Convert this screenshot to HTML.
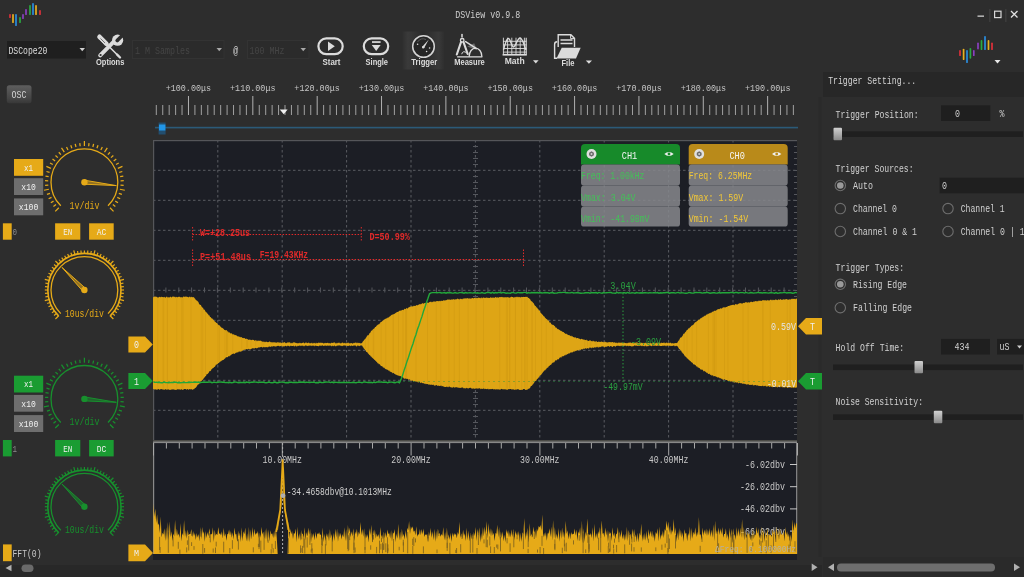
<!DOCTYPE html>
<html><head><meta charset="utf-8"><title>DSView</title>
<style>html,body{margin:0;padding:0;background:#2d2d2d;overflow:hidden;width:1024px;height:577px} svg{display:block;will-change:transform}</style>
</head><body><svg width="1024" height="577" viewBox="0 0 1024 577"><rect x="0" y="0" width="1024" height="577" fill="#2d2d2d"/>
<rect x="818.5" y="97" width="3" height="460" fill="#2a2a2a"/>
<rect x="9.15" y="14" width="1.7" height="4" rx="0.85" fill="#e0303a"/>
<rect x="12.15" y="14" width="1.7" height="9" rx="0.85" fill="#e8b020"/>
<rect x="15.15" y="14" width="1.7" height="12" rx="0.85" fill="#2a8ee0"/>
<rect x="19.15" y="17" width="1.7" height="6" rx="0.85" fill="#2aaa40"/>
<rect x="22.15" y="14" width="1.7" height="5" rx="0.85" fill="#8a40c0"/>
<rect x="25.15" y="9" width="1.7" height="6" rx="0.85" fill="#8a40c0"/>
<rect x="29.15" y="5" width="1.7" height="10" rx="0.85" fill="#2aaa40"/>
<rect x="32.15" y="3" width="1.7" height="12" rx="0.85" fill="#2a8ee0"/>
<rect x="35.15" y="5" width="1.7" height="10" rx="0.85" fill="#e8b020"/>
<rect x="39.15" y="10" width="1.7" height="5" rx="0.85" fill="#e0303a"/>
<rect x="959.15" y="50" width="1.7" height="6" rx="0.85" fill="#e0303a"/>
<rect x="962.75" y="48.7" width="1.7" height="11.299999999999997" rx="0.85" fill="#e8b020"/>
<rect x="966.15" y="50" width="1.7" height="13" rx="0.85" fill="#2a8ee0"/>
<rect x="969.55" y="48" width="1.7" height="10.700000000000003" rx="0.85" fill="#2aaa40"/>
<rect x="972.95" y="50" width="1.7" height="6" rx="0.85" fill="#8a40c0"/>
<rect x="977.15" y="42.5" width="1.7" height="6.899999999999999" rx="0.85" fill="#8a40c0"/>
<rect x="980.65" y="40" width="1.7" height="10" rx="0.85" fill="#2aaa40"/>
<rect x="984.15" y="36" width="1.7" height="14" rx="0.85" fill="#2a8ee0"/>
<rect x="987.65" y="40" width="1.7" height="10" rx="0.85" fill="#e8b020"/>
<rect x="991.15" y="42.5" width="1.7" height="7.5" rx="0.85" fill="#e0303a"/>
<path d="M994.5 60 L1000.5 60 L997.5 63.5 Z" fill="#e8e8e8"/>
<text x="487.8" y="17.8" font-family='"Liberation Mono", monospace' font-size="10" fill="#cfcfcf" text-anchor="middle" font-weight="normal" textLength="65" lengthAdjust="spacingAndGlyphs">DSView v0.9.8</text>
<rect x="977.5" y="15.5" width="6.5" height="1.3" fill="#cfcfcf"/>
<rect x="989.5" y="9" width="0.8" height="13" fill="#4a4a4a"/>
<rect x="994.6" y="11.2" width="6.4" height="6.4" fill="none" stroke="#d8d8d8" stroke-width="1.2"/>
<rect x="1005.5" y="9" width="0.8" height="13" fill="#4a4a4a"/>
<path d="M1011 11 L1017.5 17.5 M1017.5 11 L1011 17.5" stroke="#e0e0e0" stroke-width="1.3"/>
<rect x="7" y="41" width="79" height="17.5" fill="#1f1f1f"/>
<text x="8.5" y="54" font-family='"Liberation Mono", monospace' font-size="10.5" fill="#dcdcdc" text-anchor="start" font-weight="normal" textLength="39" lengthAdjust="spacingAndGlyphs">DSCope20</text>
<path d="M79.5 48 L85 48 L82.25 51.2 Z" fill="#cfcfcf"/>
<g stroke="#dcdcdc" fill="none" stroke-linecap="round"><path d="M99.5 36.8 L106.5 43.8" stroke-width="4.6"/><path d="M106 43.5 L118.5 56" stroke-width="1.6"/><path d="M117 54.5 L120 57.5" stroke-width="2.4"/></g>
<path d="M100.5 38.5 L105 43 M99 40 L103.5 44.5" stroke="#2d2d2d" stroke-width="0.6"/>
<path d="M100.2 55.3 L113.8 41.7" stroke="#dcdcdc" stroke-width="4" stroke-linecap="round"/>
<circle cx="117.6" cy="40.2" r="5.6" fill="#dcdcdc"/>
<path d="M117.2 40.6 L122.5 35.3" stroke="#2d2d2d" stroke-width="3.6" stroke-linecap="butt"/>
<circle cx="117.2" cy="40.6" r="1.8" fill="#2d2d2d"/>
<circle cx="100.6" cy="55" r="1.1" fill="#2d2d2d"/>
<text x="110.2" y="65" font-family='"Liberation Sans", sans-serif' font-size="8.6" fill="#dcdcdc" text-anchor="middle" font-weight="bold" textLength="28.4" lengthAdjust="spacingAndGlyphs">Options</text>
<rect x="132.5" y="40.5" width="91.5" height="18" fill="#2b2b2b" stroke="#333" stroke-width="1"/>
<text x="135" y="54" font-family='"Liberation Mono", monospace' font-size="10.5" fill="#454545" text-anchor="start" font-weight="normal" textLength="55" lengthAdjust="spacingAndGlyphs">1 M Samples</text>
<path d="M216.5 48 L222 48 L219.25 51.2 Z" fill="#a8a8a8"/>
<text x="235.8" y="54" font-family='"Liberation Mono", monospace' font-size="10" fill="#cfcfcf" text-anchor="middle" font-weight="normal" textLength="5" lengthAdjust="spacingAndGlyphs">@</text>
<rect x="247.5" y="40.5" width="61.5" height="18" fill="#2b2b2b" stroke="#333" stroke-width="1"/>
<text x="249.5" y="54" font-family='"Liberation Mono", monospace' font-size="10.5" fill="#454545" text-anchor="start" font-weight="normal" textLength="35" lengthAdjust="spacingAndGlyphs">100 MHz</text>
<path d="M300.5 48 L306 48 L303.25 51.2 Z" fill="#a8a8a8"/>
<rect x="318.4" y="38.4" width="24.3" height="15.8" rx="7.9" fill="none" stroke="#dcdcdc" stroke-width="2.2"/>
<path d="M328 41.6 L334.8 46.3 L328 51 Z" fill="#dcdcdc"/>
<text x="331.5" y="64.8" font-family='"Liberation Sans", sans-serif' font-size="8.6" fill="#dcdcdc" text-anchor="middle" font-weight="bold" textLength="18" lengthAdjust="spacingAndGlyphs">Start</text>
<rect x="363.8" y="38.4" width="24.4" height="15.8" rx="7.9" fill="none" stroke="#dcdcdc" stroke-width="2.2"/>
<rect x="372" y="41.2" width="8.6" height="1.7" fill="#dcdcdc"/>
<path d="M371.8 45 L380.6 45 L376.2 51 Z" fill="#dcdcdc"/>
<text x="376.8" y="64.8" font-family='"Liberation Sans", sans-serif' font-size="8.6" fill="#dcdcdc" text-anchor="middle" font-weight="bold" textLength="22.5" lengthAdjust="spacingAndGlyphs">Single</text>
<defs><linearGradient id="trg" x1="0" x2="1" y1="0" y2="0"><stop offset="0" stop-color="#2f2f2f"/><stop offset="0.13" stop-color="#3a3a3a"/><stop offset="0.5" stop-color="#2a2a2a"/><stop offset="0.87" stop-color="#393939"/><stop offset="1" stop-color="#2f2f2f"/></linearGradient></defs>
<rect x="402.5" y="31.5" width="41.5" height="38" fill="url(#trg)"/>
<circle cx="423.5" cy="46.5" r="10.8" fill="#262626" stroke="#d4d4d4" stroke-width="1.5"/>
<path d="M417.5 42 A7 7 0 0 1 426 39.5" fill="none" stroke="#5a5a5a" stroke-width="1"/>
<path d="M422.2 46.8 L428.8 39.4 L424.2 47.8 Z" fill="#dcdcdc"/>
<circle cx="423.2" cy="47.2" r="1.2" fill="#dcdcdc"/>
<circle cx="417.6" cy="44.3" r="0.8" fill="#dcdcdc"/><circle cx="429.6" cy="48" r="0.8" fill="#dcdcdc"/><circle cx="426.6" cy="51.5" r="0.8" fill="#dcdcdc"/>
<text x="424.3" y="64.8" font-family='"Liberation Sans", sans-serif' font-size="8.6" fill="#dcdcdc" text-anchor="middle" font-weight="bold" textLength="26" lengthAdjust="spacingAndGlyphs">Trigger</text>
<path d="M467.2 46.5 L474.2 43.2 L477.2 50.2 Z" fill="#6a6a6a"/>
<g stroke="#dcdcdc" fill="none" stroke-linecap="round"><path d="M462 34.6 L462 37" stroke-width="1.5"/><circle cx="462.2" cy="40.3" r="1.8" stroke-width="1.3"/><path d="M461 42.2 L456.8 54.5" stroke-width="2.1"/><path d="M463.5 42.2 L467.7 54" stroke-width="2.1"/><path d="M465.6 41.6 L476.2 48.4" stroke-width="1.5"/><path d="M469.2 56.3 A6.3 8.2 0 0 1 481.8 56.3" stroke-width="1.3"/><path d="M457.5 56.8 L482 56.8" stroke-width="1.2"/><path d="M461.8 53.8 A2.4 2.4 0 0 1 466.2 52.8" stroke-width="1"/></g>
<text x="469.5" y="64.8" font-family='"Liberation Sans", sans-serif' font-size="8.6" fill="#dcdcdc" text-anchor="middle" font-weight="bold" textLength="30.5" lengthAdjust="spacingAndGlyphs">Measure</text>
<g stroke="#dcdcdc" fill="none" stroke-width="0.9"><path d="M503.4 37.7 L503.4 54.5"/><path d="M507.6 37.7 L507.6 54.5"/><path d="M511.8 37.7 L511.8 54.5"/><path d="M516.0 37.7 L516.0 54.5"/><path d="M520.2 37.7 L520.2 54.5"/><path d="M524.4 37.7 L524.4 54.5"/><path d="M526.2 37.7 L526.2 54.5" stroke-width="1.1"/><path d="M503 41.3 L526.5 41.3"/><path d="M503 44.9 L526.5 44.9"/><path d="M503 48.5 L526.5 48.5"/><path d="M503 52.1 L526.5 52.1"/><path d="M503.5 50 C505 44 507 38 508.5 38.5 C510.5 39 511.5 47 513.5 47 C515.5 47 517.5 38 520 38 C522.5 38 524.5 46 526 50" stroke-width="1.3"/></g>
<rect x="502.6" y="53.9" width="24.2" height="1.7" fill="#dcdcdc"/>
<text x="514.7" y="64.4" font-family='"Liberation Sans", sans-serif' font-size="8.6" fill="#dcdcdc" text-anchor="middle" font-weight="bold" textLength="20" lengthAdjust="spacingAndGlyphs">Math</text>
<path d="M533 60.3 L538.6 60.3 L535.8 63.5 Z" fill="#dcdcdc"/>
<path d="M558.2 47 L558.2 34.8 L570.9 34.8 L574.5 38.4 L574.5 47" fill="none" stroke="#dcdcdc" stroke-width="1.4"/>
<path d="M570.6 35 L570.6 38.6 L574.3 38.6" fill="none" stroke="#dcdcdc" stroke-width="1"/>
<path d="M560.5 40 L572.5 40 M560.5 43.5 L572.5 43.5" stroke="#dcdcdc" stroke-width="1.3"/>
<path d="M557.2 41.8 Q554.6 41.8 554.6 44.4 L554.6 58.3 L557 58.3" fill="none" stroke="#dcdcdc" stroke-width="1.4"/>
<path d="M556.5 58.4 L561.7 47.8 L580.7 47.8 L576 58.4 Z" fill="#dcdcdc"/>
<text x="568" y="66" font-family='"Liberation Sans", sans-serif' font-size="8.6" fill="#dcdcdc" text-anchor="middle" font-weight="bold" textLength="13" lengthAdjust="spacingAndGlyphs">File</text>
<path d="M585.8 60.5 L592 60.5 L588.9 63.8 Z" fill="#dcdcdc"/>
<defs><linearGradient id="osc" x1="0" x2="0" y1="0" y2="1"><stop offset="0" stop-color="#5e5e5e"/><stop offset="0.7" stop-color="#464646"/><stop offset="1" stop-color="#383838"/></linearGradient></defs>
<rect x="6.8" y="85.2" width="24.7" height="18" rx="2.5" fill="url(#osc)"/>
<text x="19" y="97.8" font-family='"Liberation Mono", monospace' font-size="10" fill="#d0d0d0" text-anchor="middle" font-weight="normal" textLength="15" lengthAdjust="spacingAndGlyphs">OSC</text>
<g fill="#a0a0a0"><rect x="155.80" y="105" width="1" height="10"/><rect x="162.24" y="105" width="1" height="10"/><rect x="168.67" y="105" width="1" height="10"/><rect x="175.11" y="105" width="1" height="10"/><rect x="181.54" y="105" width="1" height="10"/><rect x="187.98" y="96" width="1" height="19" fill="#b0b0b0"/><rect x="194.41" y="105" width="1" height="10"/><rect x="200.84" y="105" width="1" height="10"/><rect x="207.28" y="105" width="1" height="10"/><rect x="213.72" y="105" width="1" height="10"/><rect x="220.15" y="105" width="1" height="10"/><rect x="226.59" y="105" width="1" height="10"/><rect x="233.02" y="105" width="1" height="10"/><rect x="239.46" y="105" width="1" height="10"/><rect x="245.89" y="105" width="1" height="10"/><rect x="252.32" y="96" width="1" height="19" fill="#b0b0b0"/><rect x="258.76" y="105" width="1" height="10"/><rect x="265.19" y="105" width="1" height="10"/><rect x="271.63" y="105" width="1" height="10"/><rect x="278.06" y="105" width="1" height="10"/><rect x="284.50" y="105" width="1" height="10"/><rect x="290.94" y="105" width="1" height="10"/><rect x="297.37" y="105" width="1" height="10"/><rect x="303.81" y="105" width="1" height="10"/><rect x="310.24" y="105" width="1" height="10"/><rect x="316.68" y="96" width="1" height="19" fill="#b0b0b0"/><rect x="323.11" y="105" width="1" height="10"/><rect x="329.54" y="105" width="1" height="10"/><rect x="335.98" y="105" width="1" height="10"/><rect x="342.41" y="105" width="1" height="10"/><rect x="348.85" y="105" width="1" height="10"/><rect x="355.28" y="105" width="1" height="10"/><rect x="361.72" y="105" width="1" height="10"/><rect x="368.15" y="105" width="1" height="10"/><rect x="374.59" y="105" width="1" height="10"/><rect x="381.02" y="96" width="1" height="19" fill="#b0b0b0"/><rect x="387.46" y="105" width="1" height="10"/><rect x="393.89" y="105" width="1" height="10"/><rect x="400.33" y="105" width="1" height="10"/><rect x="406.76" y="105" width="1" height="10"/><rect x="413.20" y="105" width="1" height="10"/><rect x="419.63" y="105" width="1" height="10"/><rect x="426.07" y="105" width="1" height="10"/><rect x="432.50" y="105" width="1" height="10"/><rect x="438.94" y="105" width="1" height="10"/><rect x="445.38" y="96" width="1" height="19" fill="#b0b0b0"/><rect x="451.81" y="105" width="1" height="10"/><rect x="458.25" y="105" width="1" height="10"/><rect x="464.68" y="105" width="1" height="10"/><rect x="471.12" y="105" width="1" height="10"/><rect x="477.55" y="105" width="1" height="10"/><rect x="483.99" y="105" width="1" height="10"/><rect x="490.42" y="105" width="1" height="10"/><rect x="496.86" y="105" width="1" height="10"/><rect x="503.29" y="105" width="1" height="10"/><rect x="509.72" y="96" width="1" height="19" fill="#b0b0b0"/><rect x="516.16" y="105" width="1" height="10"/><rect x="522.60" y="105" width="1" height="10"/><rect x="529.03" y="105" width="1" height="10"/><rect x="535.46" y="105" width="1" height="10"/><rect x="541.90" y="105" width="1" height="10"/><rect x="548.34" y="105" width="1" height="10"/><rect x="554.77" y="105" width="1" height="10"/><rect x="561.20" y="105" width="1" height="10"/><rect x="567.64" y="105" width="1" height="10"/><rect x="574.08" y="96" width="1" height="19" fill="#b0b0b0"/><rect x="580.51" y="105" width="1" height="10"/><rect x="586.94" y="105" width="1" height="10"/><rect x="593.38" y="105" width="1" height="10"/><rect x="599.82" y="105" width="1" height="10"/><rect x="606.25" y="105" width="1" height="10"/><rect x="612.68" y="105" width="1" height="10"/><rect x="619.12" y="105" width="1" height="10"/><rect x="625.56" y="105" width="1" height="10"/><rect x="631.99" y="105" width="1" height="10"/><rect x="638.42" y="96" width="1" height="19" fill="#b0b0b0"/><rect x="644.86" y="105" width="1" height="10"/><rect x="651.29" y="105" width="1" height="10"/><rect x="657.73" y="105" width="1" height="10"/><rect x="664.16" y="105" width="1" height="10"/><rect x="670.60" y="105" width="1" height="10"/><rect x="677.04" y="105" width="1" height="10"/><rect x="683.47" y="105" width="1" height="10"/><rect x="689.90" y="105" width="1" height="10"/><rect x="696.34" y="105" width="1" height="10"/><rect x="702.78" y="96" width="1" height="19" fill="#b0b0b0"/><rect x="709.21" y="105" width="1" height="10"/><rect x="715.64" y="105" width="1" height="10"/><rect x="722.08" y="105" width="1" height="10"/><rect x="728.51" y="105" width="1" height="10"/><rect x="734.95" y="105" width="1" height="10"/><rect x="741.38" y="105" width="1" height="10"/><rect x="747.82" y="105" width="1" height="10"/><rect x="754.25" y="105" width="1" height="10"/><rect x="760.69" y="105" width="1" height="10"/><rect x="767.12" y="96" width="1" height="19" fill="#b0b0b0"/><rect x="773.56" y="105" width="1" height="10"/><rect x="779.99" y="105" width="1" height="10"/><rect x="786.43" y="105" width="1" height="10"/><rect x="792.87" y="105" width="1" height="10"/></g>
<text x="188.4" y="91.2" font-family='"Liberation Mono", monospace' font-size="9.8" fill="#c4c4c4" text-anchor="middle" font-weight="normal" textLength="45.5" lengthAdjust="spacingAndGlyphs">+100.00μs</text>
<text x="252.8" y="91.2" font-family='"Liberation Mono", monospace' font-size="9.8" fill="#c4c4c4" text-anchor="middle" font-weight="normal" textLength="45.5" lengthAdjust="spacingAndGlyphs">+110.00μs</text>
<text x="317.1" y="91.2" font-family='"Liberation Mono", monospace' font-size="9.8" fill="#c4c4c4" text-anchor="middle" font-weight="normal" textLength="45.5" lengthAdjust="spacingAndGlyphs">+120.00μs</text>
<text x="381.5" y="91.2" font-family='"Liberation Mono", monospace' font-size="9.8" fill="#c4c4c4" text-anchor="middle" font-weight="normal" textLength="45.5" lengthAdjust="spacingAndGlyphs">+130.00μs</text>
<text x="445.9" y="91.2" font-family='"Liberation Mono", monospace' font-size="9.8" fill="#c4c4c4" text-anchor="middle" font-weight="normal" textLength="45.5" lengthAdjust="spacingAndGlyphs">+140.00μs</text>
<text x="510.2" y="91.2" font-family='"Liberation Mono", monospace' font-size="9.8" fill="#c4c4c4" text-anchor="middle" font-weight="normal" textLength="45.5" lengthAdjust="spacingAndGlyphs">+150.00μs</text>
<text x="574.6" y="91.2" font-family='"Liberation Mono", monospace' font-size="9.8" fill="#c4c4c4" text-anchor="middle" font-weight="normal" textLength="45.5" lengthAdjust="spacingAndGlyphs">+160.00μs</text>
<text x="639.0" y="91.2" font-family='"Liberation Mono", monospace' font-size="9.8" fill="#c4c4c4" text-anchor="middle" font-weight="normal" textLength="45.5" lengthAdjust="spacingAndGlyphs">+170.00μs</text>
<text x="703.4" y="91.2" font-family='"Liberation Mono", monospace' font-size="9.8" fill="#c4c4c4" text-anchor="middle" font-weight="normal" textLength="45.5" lengthAdjust="spacingAndGlyphs">+180.00μs</text>
<text x="767.7" y="91.2" font-family='"Liberation Mono", monospace' font-size="9.8" fill="#c4c4c4" text-anchor="middle" font-weight="normal" textLength="45.5" lengthAdjust="spacingAndGlyphs">+190.00μs</text>
<path d="M279.8 109.5 L287.6 109.5 L283.7 114.2 Z" fill="#f0f0f0"/>
<rect x="155" y="126.8" width="643" height="1.6" fill="#2b5a78"/>
<rect x="158.6" y="122.5" width="7" height="12" fill="#1a6fb0" opacity="0.5"/>
<rect x="159" y="124.5" width="6.4" height="6" fill="#2196e8"/>
<rect x="153" y="140" width="644" height="300" fill="#1c1e25"/>
<g stroke="#5a5c62" stroke-width="1" stroke-dasharray="2.5 2.5"><path d="M217.8 140 L217.8 440"/><path d="M282.2 140 L282.2 440"/><path d="M346.6 140 L346.6 440"/><path d="M411.0 140 L411.0 440"/><path d="M475.4 140 L475.4 440"/><path d="M539.8 140 L539.8 440"/><path d="M604.2 140 L604.2 440"/><path d="M668.6 140 L668.6 440"/><path d="M733.0 140 L733.0 440"/><path d="M153 170.3 L797 170.3"/><path d="M153 200.3 L797 200.3"/><path d="M153 230.3 L797 230.3"/><path d="M153 260.3 L797 260.3"/><path d="M153 290.3 L797 290.3"/><path d="M153 320.3 L797 320.3"/><path d="M153 350.3 L797 350.3"/><path d="M153 380.3 L797 380.3"/><path d="M153 410.3 L797 410.3"/></g>
<g stroke="#55575d" stroke-width="1"><path d="M794 146.5 L797 146.5"/><path d="M473 146.5 L478 146.5"/><path d="M794 152.5 L797 152.5"/><path d="M473 152.5 L478 152.5"/><path d="M794 158.5 L797 158.5"/><path d="M473 158.5 L478 158.5"/><path d="M794 164.5 L797 164.5"/><path d="M473 164.5 L478 164.5"/><path d="M794 170.5 L797 170.5"/><path d="M473 170.5 L478 170.5"/><path d="M794 176.5 L797 176.5"/><path d="M473 176.5 L478 176.5"/><path d="M794 182.5 L797 182.5"/><path d="M473 182.5 L478 182.5"/><path d="M794 188.5 L797 188.5"/><path d="M473 188.5 L478 188.5"/><path d="M794 194.5 L797 194.5"/><path d="M473 194.5 L478 194.5"/><path d="M794 200.5 L797 200.5"/><path d="M473 200.5 L478 200.5"/><path d="M794 206.5 L797 206.5"/><path d="M473 206.5 L478 206.5"/><path d="M794 212.5 L797 212.5"/><path d="M473 212.5 L478 212.5"/><path d="M794 218.5 L797 218.5"/><path d="M473 218.5 L478 218.5"/><path d="M794 224.5 L797 224.5"/><path d="M473 224.5 L478 224.5"/><path d="M794 230.5 L797 230.5"/><path d="M473 230.5 L478 230.5"/><path d="M794 236.5 L797 236.5"/><path d="M473 236.5 L478 236.5"/><path d="M794 242.5 L797 242.5"/><path d="M473 242.5 L478 242.5"/><path d="M794 248.5 L797 248.5"/><path d="M473 248.5 L478 248.5"/><path d="M794 254.5 L797 254.5"/><path d="M473 254.5 L478 254.5"/><path d="M794 260.5 L797 260.5"/><path d="M473 260.5 L478 260.5"/><path d="M794 266.5 L797 266.5"/><path d="M473 266.5 L478 266.5"/><path d="M794 272.5 L797 272.5"/><path d="M473 272.5 L478 272.5"/><path d="M794 278.5 L797 278.5"/><path d="M473 278.5 L478 278.5"/><path d="M794 284.5 L797 284.5"/><path d="M473 284.5 L478 284.5"/><path d="M794 290.5 L797 290.5"/><path d="M473 290.5 L478 290.5"/><path d="M794 296.5 L797 296.5"/><path d="M473 296.5 L478 296.5"/><path d="M794 302.5 L797 302.5"/><path d="M473 302.5 L478 302.5"/><path d="M794 308.5 L797 308.5"/><path d="M473 308.5 L478 308.5"/><path d="M794 314.5 L797 314.5"/><path d="M473 314.5 L478 314.5"/><path d="M794 320.5 L797 320.5"/><path d="M473 320.5 L478 320.5"/><path d="M794 326.5 L797 326.5"/><path d="M473 326.5 L478 326.5"/><path d="M794 332.5 L797 332.5"/><path d="M473 332.5 L478 332.5"/><path d="M794 338.5 L797 338.5"/><path d="M473 338.5 L478 338.5"/><path d="M794 344.5 L797 344.5"/><path d="M473 344.5 L478 344.5"/><path d="M794 350.5 L797 350.5"/><path d="M473 350.5 L478 350.5"/><path d="M794 356.5 L797 356.5"/><path d="M473 356.5 L478 356.5"/><path d="M794 362.5 L797 362.5"/><path d="M473 362.5 L478 362.5"/><path d="M794 368.5 L797 368.5"/><path d="M473 368.5 L478 368.5"/><path d="M794 374.5 L797 374.5"/><path d="M473 374.5 L478 374.5"/><path d="M794 380.5 L797 380.5"/><path d="M473 380.5 L478 380.5"/><path d="M794 386.5 L797 386.5"/><path d="M473 386.5 L478 386.5"/><path d="M794 392.5 L797 392.5"/><path d="M473 392.5 L478 392.5"/><path d="M794 398.5 L797 398.5"/><path d="M473 398.5 L478 398.5"/><path d="M794 404.5 L797 404.5"/><path d="M473 404.5 L478 404.5"/><path d="M794 410.5 L797 410.5"/><path d="M473 410.5 L478 410.5"/><path d="M794 416.5 L797 416.5"/><path d="M473 416.5 L478 416.5"/><path d="M794 422.5 L797 422.5"/><path d="M473 422.5 L478 422.5"/><path d="M794 428.5 L797 428.5"/><path d="M473 428.5 L478 428.5"/><path d="M794 434.5 L797 434.5"/><path d="M473 434.5 L478 434.5"/><path d="M165.9 287.5 L165.9 292.5"/><path d="M178.8 287.5 L178.8 292.5"/><path d="M191.6 287.5 L191.6 292.5"/><path d="M204.5 287.5 L204.5 292.5"/><path d="M217.4 287.5 L217.4 292.5"/><path d="M230.3 287.5 L230.3 292.5"/><path d="M243.2 287.5 L243.2 292.5"/><path d="M256.0 287.5 L256.0 292.5"/><path d="M268.9 287.5 L268.9 292.5"/><path d="M281.8 287.5 L281.8 292.5"/><path d="M294.7 287.5 L294.7 292.5"/><path d="M307.6 287.5 L307.6 292.5"/><path d="M320.4 287.5 L320.4 292.5"/><path d="M333.3 287.5 L333.3 292.5"/><path d="M346.2 287.5 L346.2 292.5"/><path d="M359.1 287.5 L359.1 292.5"/><path d="M372.0 287.5 L372.0 292.5"/><path d="M384.8 287.5 L384.8 292.5"/><path d="M397.7 287.5 L397.7 292.5"/><path d="M410.6 287.5 L410.6 292.5"/><path d="M423.5 287.5 L423.5 292.5"/><path d="M436.4 287.5 L436.4 292.5"/><path d="M449.2 287.5 L449.2 292.5"/><path d="M462.1 287.5 L462.1 292.5"/><path d="M475.0 287.5 L475.0 292.5"/><path d="M487.9 287.5 L487.9 292.5"/><path d="M500.8 287.5 L500.8 292.5"/><path d="M513.6 287.5 L513.6 292.5"/><path d="M526.5 287.5 L526.5 292.5"/><path d="M539.4 287.5 L539.4 292.5"/><path d="M552.3 287.5 L552.3 292.5"/><path d="M565.2 287.5 L565.2 292.5"/><path d="M578.0 287.5 L578.0 292.5"/><path d="M590.9 287.5 L590.9 292.5"/><path d="M603.8 287.5 L603.8 292.5"/><path d="M616.7 287.5 L616.7 292.5"/><path d="M629.6 287.5 L629.6 292.5"/><path d="M642.4 287.5 L642.4 292.5"/><path d="M655.3 287.5 L655.3 292.5"/><path d="M668.2 287.5 L668.2 292.5"/><path d="M681.1 287.5 L681.1 292.5"/><path d="M694.0 287.5 L694.0 292.5"/><path d="M706.8 287.5 L706.8 292.5"/><path d="M719.7 287.5 L719.7 292.5"/><path d="M732.6 287.5 L732.6 292.5"/><path d="M745.5 287.5 L745.5 292.5"/><path d="M758.4 287.5 L758.4 292.5"/><path d="M771.2 287.5 L771.2 292.5"/><path d="M784.1 287.5 L784.1 292.5"/></g>
<rect x="153" y="140" width="644" height="1.2" fill="#55565a"/>
<rect x="153" y="140" width="1.2" height="300" fill="#55565a"/>
<path d="M153.0 296.9 L153.5 297.3 L154.0 297.1 L154.5 296.6 L155.0 296.5 L155.5 296.6 L156.0 297.0 L156.5 296.6 L157.0 297.3 L157.5 297.2 L158.0 297.7 L158.5 297.5 L159.0 296.7 L159.5 296.9 L160.0 296.7 L160.5 297.3 L161.0 297.2 L161.5 296.6 L162.0 297.3 L162.5 296.9 L163.0 297.0 L163.5 297.5 L164.0 296.8 L164.5 297.1 L165.0 297.4 L165.5 297.7 L166.0 297.0 L166.5 296.7 L167.0 296.5 L167.5 297.4 L168.0 297.6 L168.5 297.3 L169.0 297.2 L169.5 297.5 L170.0 297.1 L170.5 296.6 L171.0 297.3 L171.5 297.5 L172.0 297.0 L172.5 296.5 L173.0 296.7 L173.5 296.6 L174.0 296.7 L174.5 297.0 L175.0 296.6 L175.5 297.2 L176.0 297.5 L176.5 296.8 L177.0 296.9 L177.5 297.6 L178.0 296.7 L178.5 296.8 L179.0 297.2 L179.5 296.5 L180.0 296.9 L180.5 297.6 L181.0 297.1 L181.5 297.3 L182.0 297.6 L182.5 297.5 L183.0 297.0 L183.5 296.6 L184.0 296.6 L184.5 296.8 L185.0 296.9 L185.5 296.5 L186.0 296.6 L186.5 296.5 L187.0 297.2 L187.5 296.8 L188.0 296.9 L188.5 297.5 L189.0 297.1 L189.5 296.6 L190.0 296.9 L190.5 297.5 L191.0 296.5 L191.5 297.1 L192.0 297.2 L192.5 297.1 L193.0 297.5 L193.5 297.1 L194.0 297.3 L194.5 298.2 L195.0 298.4 L195.5 299.5 L196.0 300.1 L196.5 300.6 L197.0 300.5 L197.5 301.2 L198.0 301.4 L198.5 302.3 L199.0 303.7 L199.5 304.3 L200.0 304.9 L200.5 304.7 L201.0 305.3 L201.5 306.4 L202.0 307.3 L202.5 307.7 L203.0 307.6 L203.5 309.2 L204.0 309.7 L204.5 309.6 L205.0 310.4 L205.5 311.8 L206.0 311.7 L206.5 312.7 L207.0 312.6 L207.5 314.1 L208.0 313.8 L208.5 315.3 L209.0 315.2 L209.5 315.5 L210.0 317.0 L210.5 317.1 L211.0 317.5 L211.5 318.5 L212.0 318.3 L212.5 318.8 L213.0 319.4 L213.5 319.7 L214.0 320.5 L214.5 321.3 L215.0 321.6 L215.5 322.1 L216.0 322.6 L216.5 323.0 L217.0 322.9 L217.5 323.6 L218.0 324.7 L218.5 324.7 L219.0 325.4 L219.5 325.2 L220.0 325.8 L220.5 326.8 L221.0 327.0 L221.5 327.8 L222.0 327.8 L222.5 328.1 L223.0 328.4 L223.5 328.8 L224.0 329.4 L224.5 330.0 L225.0 329.9 L225.5 330.6 L226.0 330.0 L226.5 330.3 L227.0 330.6 L227.5 331.7 L228.0 331.3 L228.5 332.2 L229.0 332.7 L229.5 332.2 L230.0 332.7 L230.5 333.7 L231.0 332.9 L231.5 333.6 L232.0 333.5 L232.5 334.4 L233.0 334.4 L233.5 334.0 L234.0 334.9 L234.5 334.5 L235.0 335.6 L235.5 335.0 L236.0 335.1 L236.5 335.6 L237.0 335.9 L237.5 336.6 L238.0 336.0 L238.5 336.7 L239.0 336.3 L239.5 337.2 L240.0 336.6 L240.5 337.5 L241.0 337.0 L241.5 337.1 L242.0 337.7 L242.5 338.0 L243.0 337.8 L243.5 338.2 L244.0 337.9 L244.5 337.9 L245.0 338.4 L245.5 339.0 L246.0 338.8 L246.5 338.8 L247.0 338.8 L247.5 339.5 L248.0 338.9 L248.5 339.9 L249.0 339.9 L249.5 339.6 L250.0 339.6 L250.5 340.1 L251.0 339.7 L251.5 340.3 L252.0 340.0 L252.5 339.7 L253.0 339.8 L253.5 340.1 L254.0 339.9 L254.5 341.0 L255.0 340.3 L255.5 340.4 L256.0 340.3 L256.5 340.5 L257.0 341.4 L257.5 340.6 L258.0 340.8 L258.5 340.5 L259.0 341.1 L259.5 340.8 L260.0 340.6 L260.5 340.8 L261.0 340.8 L261.5 341.2 L262.0 341.5 L262.5 341.8 L263.0 341.8 L263.5 341.5 L264.0 342.2 L264.5 341.9 L265.0 341.2 L265.5 342.2 L266.0 342.1 L266.5 341.4 L267.0 341.9 L267.5 342.3 L268.0 342.0 L268.5 342.2 L269.0 341.7 L269.5 341.6 L270.0 341.6 L270.5 342.2 L271.0 342.3 L271.5 342.2 L272.0 342.5 L272.5 342.2 L273.0 342.4 L273.5 342.6 L274.0 341.8 L274.5 342.6 L275.0 342.6 L275.5 342.4 L276.0 342.4 L276.5 342.7 L277.0 342.6 L277.5 342.0 L278.0 342.8 L278.5 342.6 L279.0 342.0 L279.5 342.7 L280.0 342.7 L280.5 342.6 L281.0 342.5 L281.5 343.0 L282.0 343.2 L282.5 342.0 L283.0 343.0 L283.5 342.6 L284.0 342.3 L284.5 342.3 L285.0 342.2 L285.5 343.2 L286.0 343.1 L286.5 343.2 L287.0 342.4 L287.5 342.7 L288.0 342.1 L288.5 342.7 L289.0 342.3 L289.5 342.5 L290.0 342.2 L290.5 343.2 L291.0 343.3 L291.5 343.3 L292.0 342.6 L292.5 343.4 L293.0 342.6 L293.5 342.5 L294.0 342.3 L294.5 342.6 L295.0 342.5 L295.5 342.9 L296.0 342.7 L296.5 343.3 L297.0 343.0 L297.5 343.4 L298.0 343.1 L298.5 343.2 L299.0 343.2 L299.5 342.6 L300.0 343.4 L300.5 342.9 L301.0 342.7 L301.5 343.5 L302.0 343.1 L302.5 343.0 L303.0 342.5 L303.5 342.6 L304.0 342.9 L304.5 343.4 L305.0 342.9 L305.5 342.6 L306.0 342.7 L306.5 342.6 L307.0 343.0 L307.5 343.2 L308.0 342.8 L308.5 342.8 L309.0 342.4 L309.5 343.5 L310.0 342.9 L310.5 343.4 L311.0 342.7 L311.5 342.8 L312.0 343.5 L312.5 343.4 L313.0 342.4 L313.5 343.4 L314.0 343.1 L314.5 342.8 L315.0 343.4 L315.5 343.5 L316.0 342.5 L316.5 343.0 L317.0 343.5 L317.5 343.1 L318.0 342.9 L318.5 342.4 L319.0 342.7 L319.5 343.1 L320.0 342.5 L320.5 343.1 L321.0 342.5 L321.5 343.0 L322.0 342.8 L322.5 343.1 L323.0 342.7 L323.5 343.5 L324.0 343.4 L324.5 342.7 L325.0 343.5 L325.5 342.8 L326.0 343.0 L326.5 342.9 L327.0 343.2 L327.5 342.7 L328.0 342.8 L328.5 343.2 L329.0 343.3 L329.5 343.0 L330.0 343.6 L330.5 343.4 L331.0 342.7 L331.5 342.7 L332.0 343.0 L332.5 342.7 L333.0 343.2 L333.5 342.6 L334.0 342.6 L334.5 342.6 L335.0 342.5 L335.5 343.5 L336.0 343.3 L336.5 343.5 L337.0 342.6 L337.5 343.3 L338.0 343.2 L338.5 342.8 L339.0 342.6 L339.5 342.7 L340.0 343.5 L340.5 343.6 L341.0 342.8 L341.5 343.4 L342.0 342.5 L342.5 342.8 L343.0 342.6 L343.5 343.5 L344.0 342.9 L344.5 343.3 L345.0 342.4 L345.5 343.5 L346.0 343.3 L346.5 342.8 L347.0 343.5 L347.5 342.7 L348.0 342.8 L348.5 342.4 L349.0 343.5 L349.5 343.5 L350.0 342.7 L350.5 343.5 L351.0 342.9 L351.5 342.9 L352.0 343.5 L352.5 343.4 L353.0 343.4 L353.5 343.1 L354.0 342.8 L354.5 343.3 L355.0 342.6 L355.5 342.7 L356.0 342.4 L356.5 342.8 L357.0 343.5 L357.5 342.7 L358.0 342.5 L358.5 343.3 L359.0 342.7 L359.5 343.1 L360.0 343.3 L360.5 343.2 L361.0 343.4 L361.5 343.1 L362.0 343.3 L362.5 342.0 L363.0 341.2 L363.5 341.0 L364.0 340.1 L364.5 339.5 L365.0 339.2 L365.5 338.8 L366.0 337.5 L366.5 337.3 L367.0 335.8 L367.5 335.2 L368.0 335.7 L368.5 335.0 L369.0 334.4 L369.5 333.1 L370.0 333.3 L370.5 332.3 L371.0 331.3 L371.5 330.7 L372.0 330.3 L372.5 330.3 L373.0 329.0 L373.5 329.3 L374.0 328.3 L374.5 328.4 L375.0 327.1 L375.5 327.0 L376.0 326.8 L376.5 325.8 L377.0 325.6 L377.5 325.0 L378.0 324.6 L378.5 324.2 L379.0 324.4 L379.5 323.4 L380.0 323.4 L380.5 322.1 L381.0 322.2 L381.5 321.8 L382.0 321.5 L382.5 320.6 L383.0 320.9 L383.5 319.9 L384.0 319.9 L384.5 319.2 L385.0 319.3 L385.5 318.5 L386.0 319.0 L386.5 317.9 L387.0 318.5 L387.5 317.6 L388.0 317.8 L388.5 317.5 L389.0 317.1 L389.5 316.7 L390.0 315.9 L390.5 316.2 L391.0 315.1 L391.5 315.2 L392.0 314.4 L392.5 314.9 L393.0 313.8 L393.5 314.4 L394.0 314.2 L394.5 313.7 L395.0 313.4 L395.5 312.9 L396.0 312.7 L396.5 312.5 L397.0 311.7 L397.5 312.0 L398.0 312.1 L398.5 311.5 L399.0 311.3 L399.5 310.7 L400.0 310.4 L400.5 310.7 L401.0 310.6 L401.5 310.5 L402.0 310.1 L402.5 309.8 L403.0 310.2 L403.5 309.9 L404.0 309.5 L404.5 308.7 L405.0 308.8 L405.5 309.2 L406.0 308.8 L406.5 307.8 L407.0 308.4 L407.5 308.4 L408.0 308.2 L408.5 307.6 L409.0 307.1 L409.5 307.3 L410.0 306.6 L410.5 306.5 L411.0 307.0 L411.5 306.2 L412.0 306.0 L412.5 306.5 L413.0 306.6 L413.5 306.1 L414.0 305.4 L414.5 305.9 L415.0 306.0 L415.5 306.1 L416.0 305.2 L416.5 305.1 L417.0 305.4 L417.5 305.3 L418.0 305.0 L418.5 304.8 L419.0 304.4 L419.5 303.9 L420.0 304.5 L420.5 304.2 L421.0 303.7 L421.5 304.2 L422.0 303.3 L422.5 303.3 L423.0 303.3 L423.5 303.7 L424.0 303.6 L424.5 302.9 L425.0 302.9 L425.5 302.7 L426.0 303.5 L426.5 302.8 L427.0 302.3 L427.5 302.8 L428.0 302.8 L428.5 303.1 L429.0 302.2 L429.5 301.9 L430.0 302.2 L430.5 301.7 L431.0 301.6 L431.5 302.6 L432.0 301.6 L432.5 301.9 L433.0 302.2 L433.5 301.5 L434.0 301.1 L434.5 301.9 L435.0 300.9 L435.5 301.7 L436.0 301.7 L436.5 301.0 L437.0 300.9 L437.5 301.0 L438.0 301.3 L438.5 301.3 L439.0 301.0 L439.5 301.2 L440.0 300.6 L440.5 301.3 L441.0 301.2 L441.5 300.4 L442.0 300.9 L442.5 300.8 L443.0 300.9 L443.5 300.1 L444.0 300.5 L444.5 300.5 L445.0 300.2 L445.5 300.4 L446.0 300.1 L446.5 300.2 L447.0 299.7 L447.5 299.5 L448.0 299.5 L448.5 299.4 L449.0 299.7 L449.5 299.2 L450.0 300.0 L450.5 299.9 L451.0 299.1 L451.5 299.5 L452.0 300.0 L452.5 299.0 L453.0 300.0 L453.5 299.0 L454.0 298.9 L454.5 299.8 L455.0 299.5 L455.5 299.4 L456.0 298.8 L456.5 299.5 L457.0 299.0 L457.5 298.6 L458.0 298.8 L458.5 298.9 L459.0 299.6 L459.5 299.4 L460.0 298.4 L460.5 298.9 L461.0 298.7 L461.5 298.9 L462.0 299.3 L462.5 299.2 L463.0 298.2 L463.5 299.1 L464.0 298.1 L464.5 298.7 L465.0 298.3 L465.5 298.4 L466.0 298.3 L466.5 298.3 L467.0 298.8 L467.5 298.0 L468.0 298.0 L468.5 298.7 L469.0 298.6 L469.5 298.3 L470.0 298.8 L470.5 298.8 L471.0 298.0 L471.5 298.8 L472.0 298.1 L472.5 297.9 L473.0 298.3 L473.5 298.5 L474.0 298.0 L474.5 297.8 L475.0 298.3 L475.5 297.7 L476.0 298.4 L476.5 297.6 L477.0 298.5 L477.5 297.7 L478.0 298.3 L478.5 297.6 L479.0 297.7 L479.5 298.0 L480.0 297.8 L480.5 298.5 L481.0 297.4 L481.5 297.4 L482.0 298.5 L482.5 298.1 L483.0 297.5 L483.5 297.4 L484.0 297.7 L484.5 297.7 L485.0 298.0 L485.5 297.9 L486.0 297.3 L486.5 297.6 L487.0 298.2 L487.5 297.8 L488.0 297.6 L488.5 298.0 L489.0 298.0 L489.5 298.1 L490.0 297.8 L490.5 297.4 L491.0 297.1 L491.5 297.9 L492.0 297.8 L492.5 297.5 L493.0 297.7 L493.5 297.8 L494.0 297.2 L494.5 297.9 L495.0 297.5 L495.5 297.0 L496.0 297.1 L496.5 298.0 L497.0 297.0 L497.5 297.5 L498.0 297.5 L498.5 297.8 L499.0 297.3 L499.5 297.1 L500.0 297.3 L500.5 297.0 L501.0 297.2 L501.5 297.1 L502.0 296.8 L502.5 297.3 L503.0 297.2 L503.5 297.0 L504.0 297.9 L504.5 297.0 L505.0 297.2 L505.5 296.9 L506.0 297.7 L506.5 297.3 L507.0 297.0 L507.5 297.1 L508.0 297.7 L508.5 297.2 L509.0 297.3 L509.5 297.7 L510.0 297.7 L510.5 297.1 L511.0 297.2 L511.5 296.6 L512.0 297.0 L512.5 297.0 L513.0 297.1 L513.5 297.4 L514.0 297.7 L514.5 296.7 L515.0 297.7 L515.5 296.7 L516.0 297.3 L516.5 296.6 L517.0 297.4 L517.5 296.7 L518.0 296.8 L518.5 297.0 L519.0 297.6 L519.5 296.7 L520.0 297.3 L520.5 297.3 L521.0 297.5 L521.5 296.8 L522.0 297.1 L522.5 297.0 L523.0 297.2 L523.5 296.8 L524.0 297.1 L524.5 297.0 L525.0 297.1 L525.5 297.1 L526.0 296.5 L526.5 297.0 L527.0 296.9 L527.5 296.8 L528.0 297.9 L528.5 297.9 L529.0 297.7 L529.5 299.0 L530.0 299.1 L530.5 299.9 L531.0 300.9 L531.5 301.3 L532.0 301.4 L532.5 302.0 L533.0 302.8 L533.5 303.1 L534.0 304.0 L534.5 305.1 L535.0 305.7 L535.5 305.9 L536.0 306.6 L536.5 307.4 L537.0 307.6 L537.5 308.2 L538.0 309.2 L538.5 309.2 L539.0 310.8 L539.5 310.4 L540.0 311.0 L540.5 312.7 L541.0 312.9 L541.5 313.8 L542.0 314.1 L542.5 314.8 L543.0 315.3 L543.5 315.9 L544.0 316.5 L544.5 316.4 L545.0 317.7 L545.5 318.1 L546.0 318.8 L546.5 319.0 L547.0 319.2 L547.5 319.8 L548.0 320.7 L548.5 320.5 L549.0 320.9 L549.5 322.3 L550.0 322.9 L550.5 322.3 L551.0 323.5 L551.5 324.4 L552.0 324.2 L552.5 324.9 L553.0 324.7 L553.5 325.0 L554.0 325.5 L554.5 325.9 L555.0 326.3 L555.5 327.4 L556.0 327.8 L556.5 327.4 L557.0 328.5 L557.5 328.9 L558.0 329.2 L558.5 329.3 L559.0 329.4 L559.5 330.3 L560.0 329.8 L560.5 331.1 L561.0 330.8 L561.5 330.9 L562.0 331.6 L562.5 331.7 L563.0 332.1 L563.5 332.0 L564.0 332.6 L564.5 333.2 L565.0 333.1 L565.5 334.1 L566.0 333.9 L566.5 333.5 L567.0 334.5 L567.5 334.3 L568.0 335.3 L568.5 335.1 L569.0 335.1 L569.5 335.2 L570.0 335.7 L570.5 336.2 L571.0 335.4 L571.5 336.1 L572.0 336.7 L572.5 336.0 L573.0 337.1 L573.5 337.0 L574.0 337.5 L574.5 337.5 L575.0 337.2 L575.5 337.6 L576.0 337.4 L576.5 338.4 L577.0 338.1 L577.5 338.1 L578.0 338.0 L578.5 338.8 L579.0 338.1 L579.5 339.0 L580.0 338.9 L580.5 339.4 L581.0 339.0 L581.5 338.8 L582.0 338.9 L582.5 339.2 L583.0 339.4 L583.5 339.2 L584.0 340.3 L584.5 339.3 L585.0 340.2 L585.5 340.1 L586.0 340.1 L586.5 339.6 L587.0 340.7 L587.5 340.4 L588.0 340.7 L588.5 341.0 L589.0 341.0 L589.5 340.3 L590.0 340.4 L590.5 340.3 L591.0 340.9 L591.5 340.9 L592.0 341.5 L592.5 341.2 L593.0 340.6 L593.5 340.9 L594.0 341.4 L594.5 341.5 L595.0 341.3 L595.5 341.9 L596.0 341.1 L596.5 341.2 L597.0 342.0 L597.5 342.0 L598.0 342.0 L598.5 341.8 L599.0 341.2 L599.5 342.1 L600.0 342.0 L600.5 341.9 L601.0 341.4 L601.5 341.6 L602.0 341.9 L602.5 341.7 L603.0 342.2 L603.5 342.3 L604.0 341.5 L604.5 341.8 L605.0 342.6 L605.5 341.7 L606.0 341.7 L606.5 342.6 L607.0 342.2 L607.5 342.6 L608.0 342.4 L608.5 342.0 L609.0 342.6 L609.5 341.9 L610.0 342.1 L610.5 342.0 L611.0 342.8 L611.5 342.0 L612.0 342.2 L612.5 342.0 L613.0 342.0 L613.5 342.7 L614.0 342.5 L614.5 342.2 L615.0 342.4 L615.5 343.2 L616.0 342.1 L616.5 343.1 L617.0 342.9 L617.5 343.2 L618.0 343.0 L618.5 342.2 L619.0 343.1 L619.5 342.3 L620.0 343.2 L620.5 342.8 L621.0 342.3 L621.5 343.0 L622.0 342.2 L622.5 342.9 L623.0 342.5 L623.5 342.9 L624.0 343.1 L624.5 342.4 L625.0 343.1 L625.5 343.1 L626.0 343.2 L626.5 343.2 L627.0 342.8 L627.5 343.3 L628.0 343.3 L628.5 342.5 L629.0 342.7 L629.5 342.7 L630.0 342.3 L630.5 342.8 L631.0 342.4 L631.5 343.2 L632.0 342.7 L632.5 342.7 L633.0 342.3 L633.5 343.4 L634.0 342.9 L634.5 342.9 L635.0 343.5 L635.5 342.5 L636.0 342.6 L636.5 342.3 L637.0 343.1 L637.5 342.3 L638.0 343.0 L638.5 343.2 L639.0 343.4 L639.5 342.4 L640.0 342.9 L640.5 342.7 L641.0 342.8 L641.5 343.0 L642.0 342.5 L642.5 343.2 L643.0 343.3 L643.5 342.8 L644.0 343.4 L644.5 342.8 L645.0 343.3 L645.5 342.6 L646.0 342.9 L646.5 343.3 L647.0 343.3 L647.5 342.4 L648.0 343.5 L648.5 342.7 L649.0 343.1 L649.5 343.0 L650.0 342.9 L650.5 342.4 L651.0 343.5 L651.5 343.5 L652.0 343.3 L652.5 343.4 L653.0 343.1 L653.5 343.2 L654.0 343.0 L654.5 343.1 L655.0 343.0 L655.5 343.5 L656.0 342.7 L656.5 342.5 L657.0 343.5 L657.5 342.7 L658.0 343.0 L658.5 342.5 L659.0 342.7 L659.5 342.7 L660.0 342.5 L660.5 343.4 L661.0 343.1 L661.5 342.6 L662.0 342.9 L662.5 343.1 L663.0 342.8 L663.5 342.7 L664.0 342.8 L664.5 342.4 L665.0 343.4 L665.5 343.1 L666.0 342.7 L666.5 342.7 L667.0 342.6 L667.5 343.4 L668.0 342.5 L668.5 342.9 L669.0 342.5 L669.5 343.5 L670.0 342.6 L670.5 342.8 L671.0 343.1 L671.5 343.4 L672.0 343.3 L672.5 343.3 L673.0 343.3 L673.5 343.5 L674.0 343.4 L674.5 343.3 L675.0 343.0 L675.5 343.1 L676.0 343.3 L676.5 343.1 L677.0 342.9 L677.5 342.5 L678.0 341.4 L678.5 340.7 L679.0 340.4 L679.5 339.4 L680.0 338.3 L680.5 337.6 L681.0 337.5 L681.5 337.2 L682.0 336.5 L682.5 336.0 L683.0 334.8 L683.5 333.7 L684.0 333.7 L684.5 333.6 L685.0 332.5 L685.5 331.9 L686.0 331.6 L686.5 330.6 L687.0 330.1 L687.5 330.0 L688.0 328.7 L688.5 328.6 L689.0 328.3 L689.5 328.3 L690.0 327.1 L690.5 327.3 L691.0 326.3 L691.5 325.4 L692.0 325.9 L692.5 324.9 L693.0 324.9 L693.5 324.4 L694.0 324.0 L694.5 322.7 L695.0 322.8 L695.5 322.0 L696.0 322.1 L696.5 321.4 L697.0 321.3 L697.5 320.7 L698.0 320.2 L698.5 319.4 L699.0 320.1 L699.5 319.5 L700.0 319.0 L700.5 318.3 L701.0 318.3 L701.5 318.0 L702.0 317.2 L702.5 317.6 L703.0 316.5 L703.5 316.7 L704.0 316.5 L704.5 315.5 L705.0 316.1 L705.5 315.7 L706.0 314.8 L706.5 314.4 L707.0 314.7 L707.5 314.3 L708.0 313.5 L708.5 313.9 L709.0 313.5 L709.5 313.0 L710.0 313.6 L710.5 312.6 L711.0 312.9 L711.5 312.4 L712.0 312.1 L712.5 311.5 L713.0 311.9 L713.5 311.2 L714.0 311.2 L714.5 310.7 L715.0 310.6 L715.5 311.1 L716.0 310.4 L716.5 310.2 L717.0 309.8 L717.5 309.3 L718.0 309.4 L718.5 309.0 L719.0 308.9 L719.5 309.2 L720.0 308.4 L720.5 308.1 L721.0 308.9 L721.5 308.2 L722.0 308.5 L722.5 307.8 L723.0 307.6 L723.5 307.3 L724.0 307.5 L724.5 307.3 L725.0 307.4 L725.5 307.5 L726.0 306.7 L726.5 306.9 L727.0 307.0 L727.5 306.5 L728.0 306.0 L728.5 306.0 L729.0 306.1 L729.5 305.8 L730.0 305.4 L730.5 305.4 L731.0 305.1 L731.5 305.2 L732.0 305.0 L732.5 304.9 L733.0 304.6 L733.5 304.7 L734.0 305.3 L734.5 305.2 L735.0 304.2 L735.5 303.9 L736.0 304.6 L736.5 304.2 L737.0 304.4 L737.5 304.5 L738.0 304.1 L738.5 303.4 L739.0 304.1 L739.5 303.1 L740.0 303.2 L740.5 303.3 L741.0 302.9 L741.5 303.5 L742.0 303.7 L742.5 303.4 L743.0 303.0 L743.5 302.8 L744.0 303.3 L744.5 302.6 L745.0 303.2 L745.5 302.1 L746.0 302.1 L746.5 302.2 L747.0 302.8 L747.5 302.6 L748.0 302.6 L748.5 302.0 L749.0 302.7 L749.5 302.6 L750.0 302.3 L750.5 302.1 L751.0 301.4 L751.5 301.8 L752.0 302.3 L752.5 302.0 L753.0 301.9 L753.5 301.3 L754.0 302.1 L754.5 301.5 L755.0 300.9 L755.5 301.3 L756.0 301.1 L756.5 301.5 L757.0 300.9 L757.5 301.2 L758.0 301.6 L758.5 300.8 L759.0 300.6 L759.5 300.8 L760.0 301.0 L760.5 300.5 L761.0 300.9 L761.5 301.1 L762.0 300.3 L762.5 300.5 L763.0 300.1 L763.5 300.2 L764.0 300.5 L764.5 300.3 L765.0 300.3 L765.5 299.9 L766.0 301.0 L766.5 299.9 L767.0 300.9 L767.5 299.8 L768.0 300.2 L768.5 300.3 L769.0 300.7 L769.5 300.3 L770.0 300.3 L770.5 299.8 L771.0 299.5 L771.5 300.4 L772.0 299.6 L772.5 300.4 L773.0 299.5 L773.5 300.3 L774.0 299.7 L774.5 300.2 L775.0 299.7 L775.5 299.6 L776.0 299.4 L776.5 299.8 L777.0 300.1 L777.5 300.2 L778.0 299.6 L778.5 299.2 L779.0 299.7 L779.5 299.8 L780.0 299.5 L780.5 299.0 L781.0 299.4 L781.5 299.7 L782.0 299.9 L782.5 299.8 L783.0 299.2 L783.5 299.4 L784.0 299.2 L784.5 299.5 L785.0 299.8 L785.5 299.1 L786.0 299.4 L786.5 298.9 L787.0 299.0 L787.5 299.8 L788.0 299.6 L788.5 299.7 L789.0 299.5 L789.5 299.4 L790.0 298.9 L790.5 299.7 L791.0 299.3 L791.5 298.9 L792.0 298.5 L792.5 299.3 L793.0 298.5 L793.5 298.9 L794.0 298.9 L794.5 299.1 L795.0 298.5 L795.5 299.4 L796.0 298.5 L796.5 298.6 L797.0 299.0 L797.0 387.4 L796.5 387.2 L796.0 388.1 L795.5 387.7 L795.0 387.3 L794.5 387.5 L794.0 387.7 L793.5 387.7 L793.0 387.8 L792.5 387.5 L792.0 387.2 L791.5 388.0 L791.0 387.3 L790.5 387.5 L790.0 387.6 L789.5 387.6 L789.0 387.0 L788.5 387.6 L788.0 388.0 L787.5 387.9 L787.0 387.4 L786.5 386.9 L786.0 387.2 L785.5 387.3 L785.0 386.9 L784.5 387.7 L784.0 387.2 L783.5 387.2 L783.0 387.4 L782.5 387.1 L782.0 387.6 L781.5 386.6 L781.0 386.8 L780.5 386.6 L780.0 387.7 L779.5 386.7 L779.0 386.6 L778.5 386.8 L778.0 387.0 L777.5 387.5 L777.0 387.2 L776.5 387.1 L776.0 386.4 L775.5 387.3 L775.0 386.9 L774.5 386.6 L774.0 386.4 L773.5 387.1 L773.0 387.1 L772.5 387.2 L772.0 386.9 L771.5 386.4 L771.0 387.0 L770.5 386.2 L770.0 386.3 L769.5 387.1 L769.0 386.7 L768.5 385.9 L768.0 386.1 L767.5 386.4 L767.0 386.5 L766.5 386.6 L766.0 386.6 L765.5 385.7 L765.0 385.8 L764.5 386.2 L764.0 385.7 L763.5 386.4 L763.0 385.8 L762.5 385.7 L762.0 385.7 L761.5 386.3 L761.0 385.9 L760.5 386.1 L760.0 386.1 L759.5 386.1 L759.0 385.8 L758.5 386.1 L758.0 385.5 L757.5 385.5 L757.0 385.2 L756.5 385.7 L756.0 385.0 L755.5 385.0 L755.0 385.2 L754.5 385.0 L754.0 385.4 L753.5 385.2 L753.0 385.5 L752.5 384.5 L752.0 384.5 L751.5 385.0 L751.0 385.1 L750.5 384.8 L750.0 385.1 L749.5 384.9 L749.0 384.5 L748.5 384.1 L748.0 384.9 L747.5 384.3 L747.0 383.9 L746.5 384.8 L746.0 384.6 L745.5 383.8 L745.0 384.2 L744.5 383.5 L744.0 384.3 L743.5 383.2 L743.0 384.0 L742.5 383.4 L742.0 383.7 L741.5 383.1 L741.0 383.2 L740.5 383.2 L740.0 382.9 L739.5 382.6 L739.0 383.3 L738.5 383.5 L738.0 382.5 L737.5 382.6 L737.0 382.4 L736.5 382.8 L736.0 382.3 L735.5 382.6 L735.0 382.1 L734.5 382.7 L734.0 382.4 L733.5 381.9 L733.0 382.2 L732.5 381.5 L732.0 381.2 L731.5 381.6 L731.0 381.5 L730.5 381.5 L730.0 381.6 L729.5 380.6 L729.0 380.7 L728.5 381.0 L728.0 381.0 L727.5 380.6 L727.0 380.0 L726.5 380.0 L726.0 379.9 L725.5 380.1 L725.0 379.6 L724.5 379.3 L724.0 379.3 L723.5 380.0 L723.0 379.8 L722.5 379.4 L722.0 378.6 L721.5 379.2 L721.0 378.2 L720.5 378.2 L720.0 378.6 L719.5 378.0 L719.0 377.4 L718.5 377.5 L718.0 377.3 L717.5 377.8 L717.0 376.7 L716.5 376.9 L716.0 376.4 L715.5 376.4 L715.0 376.1 L714.5 375.9 L714.0 376.4 L713.5 376.3 L713.0 375.3 L712.5 375.3 L712.0 375.7 L711.5 375.5 L711.0 374.5 L710.5 375.0 L710.0 374.7 L709.5 373.5 L709.0 373.9 L708.5 374.1 L708.0 373.8 L707.5 372.9 L707.0 372.6 L706.5 373.0 L706.0 372.0 L705.5 371.8 L705.0 371.5 L704.5 370.8 L704.0 371.5 L703.5 371.2 L703.0 370.2 L702.5 369.8 L702.0 369.5 L701.5 369.5 L701.0 369.9 L700.5 369.2 L700.0 368.7 L699.5 368.0 L699.0 368.1 L698.5 367.4 L698.0 367.5 L697.5 367.3 L697.0 366.0 L696.5 366.8 L696.0 366.0 L695.5 365.1 L695.0 365.1 L694.5 364.4 L694.0 364.2 L693.5 364.5 L693.0 363.7 L692.5 362.6 L692.0 363.0 L691.5 361.9 L691.0 362.1 L690.5 361.1 L690.0 361.0 L689.5 360.3 L689.0 360.3 L688.5 359.5 L688.0 358.8 L687.5 358.4 L687.0 358.4 L686.5 357.5 L686.0 356.7 L685.5 356.4 L685.0 356.4 L684.5 355.6 L684.0 354.7 L683.5 353.6 L683.0 354.0 L682.5 352.6 L682.0 352.8 L681.5 351.5 L681.0 350.6 L680.5 350.6 L680.0 349.6 L679.5 349.1 L679.0 349.0 L678.5 347.7 L678.0 347.3 L677.5 346.3 L677.0 345.7 L676.5 345.7 L676.0 346.3 L675.5 345.7 L675.0 346.4 L674.5 345.9 L674.0 345.2 L673.5 345.4 L673.0 346.1 L672.5 345.8 L672.0 346.1 L671.5 345.8 L671.0 346.2 L670.5 346.0 L670.0 345.6 L669.5 346.1 L669.0 345.5 L668.5 346.1 L668.0 345.7 L667.5 345.7 L667.0 345.3 L666.5 346.1 L666.0 346.4 L665.5 345.8 L665.0 345.5 L664.5 345.6 L664.0 345.9 L663.5 345.8 L663.0 345.5 L662.5 345.8 L662.0 345.9 L661.5 346.1 L661.0 346.0 L660.5 345.9 L660.0 345.9 L659.5 345.5 L659.0 345.7 L658.5 345.4 L658.0 345.4 L657.5 345.8 L657.0 345.8 L656.5 345.9 L656.0 346.0 L655.5 345.6 L655.0 345.7 L654.5 345.5 L654.0 346.3 L653.5 345.6 L653.0 345.5 L652.5 345.3 L652.0 346.3 L651.5 346.0 L651.0 346.2 L650.5 345.4 L650.0 345.8 L649.5 345.3 L649.0 345.7 L648.5 345.7 L648.0 346.4 L647.5 345.9 L647.0 346.3 L646.5 346.3 L646.0 346.4 L645.5 345.6 L645.0 345.7 L644.5 346.4 L644.0 345.9 L643.5 345.8 L643.0 346.4 L642.5 345.5 L642.0 345.9 L641.5 346.3 L641.0 345.4 L640.5 345.4 L640.0 345.9 L639.5 345.4 L639.0 346.1 L638.5 345.4 L638.0 345.9 L637.5 346.0 L637.0 345.5 L636.5 345.4 L636.0 346.3 L635.5 345.4 L635.0 345.6 L634.5 345.3 L634.0 345.9 L633.5 345.9 L633.0 346.4 L632.5 346.2 L632.0 346.2 L631.5 346.4 L631.0 346.2 L630.5 346.0 L630.0 346.0 L629.5 346.1 L629.0 345.6 L628.5 346.4 L628.0 345.7 L627.5 345.9 L627.0 345.4 L626.5 346.4 L626.0 345.8 L625.5 345.5 L625.0 345.9 L624.5 345.5 L624.0 346.1 L623.5 346.3 L623.0 345.7 L622.5 346.0 L622.0 345.6 L621.5 345.7 L621.0 346.4 L620.5 345.7 L620.0 345.8 L619.5 346.0 L619.0 346.2 L618.5 345.5 L618.0 346.0 L617.5 345.6 L617.0 345.9 L616.5 345.7 L616.0 345.9 L615.5 346.7 L615.0 346.8 L614.5 345.9 L614.0 346.0 L613.5 345.9 L613.0 346.8 L612.5 346.9 L612.0 346.8 L611.5 346.3 L611.0 346.2 L610.5 346.1 L610.0 346.3 L609.5 346.9 L609.0 346.5 L608.5 345.9 L608.0 346.1 L607.5 346.5 L607.0 346.3 L606.5 346.7 L606.0 347.1 L605.5 346.5 L605.0 347.1 L604.5 347.2 L604.0 347.2 L603.5 346.4 L603.0 346.2 L602.5 346.4 L602.0 346.4 L601.5 346.4 L601.0 346.7 L600.5 347.2 L600.0 346.7 L599.5 347.5 L599.0 346.6 L598.5 347.7 L598.0 347.4 L597.5 346.6 L597.0 347.7 L596.5 347.1 L596.0 346.7 L595.5 347.9 L595.0 347.0 L594.5 347.3 L594.0 348.0 L593.5 347.6 L593.0 348.2 L592.5 347.5 L592.0 347.2 L591.5 348.3 L591.0 348.3 L590.5 347.4 L590.0 347.6 L589.5 347.5 L589.0 348.7 L588.5 348.5 L588.0 348.2 L587.5 348.1 L587.0 348.4 L586.5 349.1 L586.0 348.0 L585.5 348.5 L585.0 348.3 L584.5 349.0 L584.0 348.8 L583.5 348.5 L583.0 349.2 L582.5 349.3 L582.0 349.6 L581.5 349.1 L581.0 349.7 L580.5 349.7 L580.0 350.3 L579.5 349.6 L579.0 350.4 L578.5 350.1 L578.0 350.6 L577.5 350.1 L577.0 350.8 L576.5 350.4 L576.0 351.1 L575.5 351.3 L575.0 350.6 L574.5 351.8 L574.0 351.8 L573.5 351.3 L573.0 352.2 L572.5 352.3 L572.0 352.6 L571.5 352.4 L571.0 352.2 L570.5 352.4 L570.0 353.3 L569.5 353.3 L569.0 353.7 L568.5 353.2 L568.0 354.1 L567.5 354.0 L567.0 354.5 L566.5 354.9 L566.0 354.3 L565.5 355.2 L565.0 355.4 L564.5 355.2 L564.0 355.8 L563.5 356.2 L563.0 356.3 L562.5 356.5 L562.0 356.1 L561.5 357.4 L561.0 357.5 L560.5 357.0 L560.0 358.0 L559.5 357.6 L559.0 359.0 L558.5 359.3 L558.0 359.4 L557.5 359.0 L557.0 360.2 L556.5 360.5 L556.0 360.1 L555.5 360.6 L555.0 360.7 L554.5 362.1 L554.0 362.6 L553.5 362.6 L553.0 362.2 L552.5 362.9 L552.0 363.2 L551.5 364.0 L551.0 365.0 L550.5 364.8 L550.0 365.3 L549.5 365.9 L549.0 365.8 L548.5 366.8 L548.0 367.8 L547.5 367.6 L547.0 368.1 L546.5 368.4 L546.0 369.6 L545.5 369.6 L545.0 370.7 L544.5 370.2 L544.0 370.8 L543.5 371.8 L543.0 372.0 L542.5 373.0 L542.0 373.6 L541.5 374.2 L541.0 375.0 L540.5 375.3 L540.0 375.4 L539.5 376.1 L539.0 377.0 L538.5 377.8 L538.0 378.4 L537.5 378.8 L537.0 379.1 L536.5 380.2 L536.0 381.1 L535.5 380.8 L535.0 381.6 L534.5 382.1 L534.0 383.0 L533.5 383.4 L533.0 384.4 L532.5 384.6 L532.0 385.7 L531.5 386.0 L531.0 385.8 L530.5 386.9 L530.0 388.0 L529.5 388.5 L529.0 388.6 L528.5 389.0 L528.0 388.8 L527.5 389.6 L527.0 390.3 L526.5 389.6 L526.0 389.9 L525.5 390.0 L525.0 389.5 L524.5 389.1 L524.0 389.0 L523.5 389.1 L523.0 389.2 L522.5 390.0 L522.0 389.8 L521.5 389.7 L521.0 389.9 L520.5 390.0 L520.0 389.8 L519.5 389.9 L519.0 389.8 L518.5 389.1 L518.0 389.8 L517.5 389.0 L517.0 389.2 L516.5 390.0 L516.0 388.9 L515.5 389.8 L515.0 389.8 L514.5 389.8 L514.0 389.8 L513.5 389.2 L513.0 389.6 L512.5 389.4 L512.0 389.1 L511.5 389.7 L511.0 389.0 L510.5 389.1 L510.0 389.1 L509.5 389.2 L509.0 388.9 L508.5 389.1 L508.0 389.7 L507.5 389.5 L507.0 389.9 L506.5 389.4 L506.0 389.5 L505.5 389.6 L505.0 389.0 L504.5 389.6 L504.0 389.3 L503.5 389.6 L503.0 389.0 L502.5 389.5 L502.0 389.1 L501.5 389.1 L501.0 388.7 L500.5 389.8 L500.0 389.5 L499.5 389.4 L499.0 389.7 L498.5 389.2 L498.0 389.3 L497.5 389.4 L497.0 389.2 L496.5 389.2 L496.0 389.5 L495.5 389.2 L495.0 389.7 L494.5 389.0 L494.0 389.3 L493.5 389.6 L493.0 389.0 L492.5 389.0 L492.0 388.7 L491.5 389.3 L491.0 388.9 L490.5 389.2 L490.0 388.9 L489.5 389.2 L489.0 389.2 L488.5 389.4 L488.0 388.6 L487.5 389.2 L487.0 388.8 L486.5 389.2 L486.0 389.0 L485.5 388.8 L485.0 388.9 L484.5 389.2 L484.0 388.3 L483.5 388.5 L483.0 389.0 L482.5 388.7 L482.0 389.1 L481.5 388.6 L481.0 389.3 L480.5 389.0 L480.0 388.3 L479.5 388.3 L479.0 388.5 L478.5 388.2 L478.0 389.0 L477.5 388.4 L477.0 388.3 L476.5 388.5 L476.0 388.6 L475.5 388.5 L475.0 388.8 L474.5 388.9 L474.0 388.3 L473.5 388.6 L473.0 388.7 L472.5 388.4 L472.0 388.8 L471.5 388.4 L471.0 388.1 L470.5 387.7 L470.0 387.8 L469.5 388.1 L469.0 388.1 L468.5 388.6 L468.0 388.5 L467.5 388.3 L467.0 388.1 L466.5 387.8 L466.0 388.6 L465.5 388.5 L465.0 388.0 L464.5 388.4 L464.0 388.0 L463.5 388.5 L463.0 387.6 L462.5 387.5 L462.0 387.4 L461.5 387.5 L461.0 388.1 L460.5 388.1 L460.0 387.6 L459.5 387.9 L459.0 387.7 L458.5 387.4 L458.0 387.9 L457.5 387.3 L457.0 387.4 L456.5 387.2 L456.0 387.0 L455.5 387.2 L455.0 387.8 L454.5 387.7 L454.0 386.8 L453.5 386.9 L453.0 387.8 L452.5 387.6 L452.0 387.6 L451.5 387.5 L451.0 387.2 L450.5 387.3 L450.0 387.1 L449.5 386.4 L449.0 386.5 L448.5 387.4 L448.0 386.2 L447.5 387.3 L447.0 386.9 L446.5 386.4 L446.0 386.9 L445.5 387.0 L445.0 386.9 L444.5 387.0 L444.0 386.6 L443.5 386.8 L443.0 386.1 L442.5 386.0 L442.0 386.7 L441.5 385.8 L441.0 385.5 L440.5 385.7 L440.0 386.1 L439.5 385.9 L439.0 385.8 L438.5 385.5 L438.0 386.1 L437.5 385.9 L437.0 385.0 L436.5 385.0 L436.0 385.4 L435.5 385.3 L435.0 385.7 L434.5 385.5 L434.0 385.6 L433.5 384.8 L433.0 384.6 L432.5 385.1 L432.0 385.0 L431.5 384.4 L431.0 384.8 L430.5 385.0 L430.0 384.2 L429.5 384.5 L429.0 384.9 L428.5 384.6 L428.0 384.1 L427.5 383.9 L427.0 384.2 L426.5 383.7 L426.0 384.2 L425.5 383.9 L425.0 383.2 L424.5 384.1 L424.0 383.4 L423.5 383.0 L423.0 383.4 L422.5 383.0 L422.0 382.9 L421.5 382.4 L421.0 382.5 L420.5 383.2 L420.0 382.5 L419.5 382.1 L419.0 381.8 L418.5 382.5 L418.0 382.7 L417.5 381.7 L417.0 381.4 L416.5 381.4 L416.0 382.0 L415.5 381.6 L415.0 381.1 L414.5 381.1 L414.0 381.7 L413.5 381.5 L413.0 380.9 L412.5 380.6 L412.0 380.6 L411.5 380.8 L411.0 380.8 L410.5 380.7 L410.0 379.6 L409.5 379.6 L409.0 379.4 L408.5 380.0 L408.0 378.9 L407.5 378.9 L407.0 378.6 L406.5 378.7 L406.0 379.2 L405.5 378.1 L405.0 378.9 L404.5 378.7 L404.0 378.3 L403.5 378.4 L403.0 377.1 L402.5 377.2 L402.0 376.7 L401.5 377.3 L401.0 376.3 L400.5 376.0 L400.0 376.3 L399.5 376.1 L399.0 375.5 L398.5 375.4 L398.0 375.9 L397.5 375.0 L397.0 375.2 L396.5 374.8 L396.0 374.8 L395.5 374.5 L395.0 373.9 L394.5 373.9 L394.0 373.2 L393.5 372.8 L393.0 373.2 L392.5 373.3 L392.0 372.3 L391.5 372.2 L391.0 371.9 L390.5 371.4 L390.0 371.9 L389.5 370.8 L389.0 370.5 L388.5 370.7 L388.0 370.1 L387.5 369.4 L387.0 370.2 L386.5 368.9 L386.0 369.6 L385.5 368.7 L385.0 368.9 L384.5 367.8 L384.0 367.7 L383.5 367.5 L383.0 367.5 L382.5 366.7 L382.0 365.8 L381.5 366.3 L381.0 365.9 L380.5 365.6 L380.0 364.4 L379.5 364.0 L379.0 364.5 L378.5 363.4 L378.0 363.2 L377.5 363.2 L377.0 362.0 L376.5 362.1 L376.0 360.9 L375.5 361.0 L375.0 360.0 L374.5 360.1 L374.0 359.2 L373.5 358.7 L373.0 358.4 L372.5 357.8 L372.0 357.7 L371.5 356.7 L371.0 356.4 L370.5 356.2 L370.0 355.1 L369.5 355.3 L369.0 354.4 L368.5 353.7 L368.0 353.4 L367.5 352.4 L367.0 351.9 L366.5 352.1 L366.0 351.4 L365.5 349.9 L365.0 349.9 L364.5 348.8 L364.0 349.1 L363.5 347.6 L363.0 347.6 L362.5 346.2 L362.0 345.4 L361.5 345.6 L361.0 345.6 L360.5 345.3 L360.0 346.2 L359.5 346.0 L359.0 345.7 L358.5 345.7 L358.0 345.8 L357.5 345.3 L357.0 346.4 L356.5 346.4 L356.0 345.9 L355.5 345.3 L355.0 346.1 L354.5 345.3 L354.0 345.6 L353.5 345.6 L353.0 346.1 L352.5 346.1 L352.0 345.4 L351.5 345.8 L351.0 345.5 L350.5 346.3 L350.0 345.8 L349.5 345.2 L349.0 346.0 L348.5 346.1 L348.0 345.5 L347.5 346.1 L347.0 345.9 L346.5 345.5 L346.0 346.3 L345.5 345.5 L345.0 345.3 L344.5 345.3 L344.0 346.2 L343.5 345.2 L343.0 345.6 L342.5 346.3 L342.0 345.8 L341.5 345.7 L341.0 346.2 L340.5 345.5 L340.0 345.4 L339.5 345.6 L339.0 345.2 L338.5 345.6 L338.0 345.7 L337.5 345.2 L337.0 346.3 L336.5 345.6 L336.0 346.4 L335.5 346.3 L335.0 345.7 L334.5 345.3 L334.0 346.4 L333.5 345.7 L333.0 346.3 L332.5 345.7 L332.0 345.4 L331.5 346.4 L331.0 346.1 L330.5 345.5 L330.0 345.6 L329.5 345.5 L329.0 346.1 L328.5 345.5 L328.0 345.7 L327.5 345.3 L327.0 346.3 L326.5 345.5 L326.0 346.0 L325.5 345.2 L325.0 346.1 L324.5 345.5 L324.0 345.8 L323.5 346.0 L323.0 345.8 L322.5 345.2 L322.0 345.5 L321.5 345.9 L321.0 345.3 L320.5 346.1 L320.0 345.5 L319.5 345.6 L319.0 346.3 L318.5 346.2 L318.0 345.9 L317.5 346.1 L317.0 346.1 L316.5 346.1 L316.0 345.4 L315.5 345.5 L315.0 346.3 L314.5 346.3 L314.0 345.2 L313.5 345.8 L313.0 346.1 L312.5 345.3 L312.0 346.3 L311.5 345.8 L311.0 345.5 L310.5 345.5 L310.0 346.0 L309.5 345.4 L309.0 345.6 L308.5 345.7 L308.0 345.9 L307.5 345.8 L307.0 346.3 L306.5 345.6 L306.0 345.4 L305.5 345.4 L305.0 345.4 L304.5 346.5 L304.0 345.5 L303.5 346.4 L303.0 345.5 L302.5 345.8 L302.0 345.7 L301.5 345.6 L301.0 346.2 L300.5 345.7 L300.0 345.5 L299.5 345.4 L299.0 346.1 L298.5 345.9 L298.0 345.4 L297.5 346.0 L297.0 346.4 L296.5 346.3 L296.0 346.5 L295.5 345.6 L295.0 345.7 L294.5 346.5 L294.0 346.4 L293.5 345.4 L293.0 345.9 L292.5 346.1 L292.0 345.9 L291.5 345.7 L291.0 346.3 L290.5 345.6 L290.0 346.3 L289.5 346.4 L289.0 345.9 L288.5 345.8 L288.0 346.0 L287.5 345.5 L287.0 346.6 L286.5 346.3 L286.0 346.1 L285.5 345.7 L285.0 346.1 L284.5 346.2 L284.0 346.7 L283.5 345.9 L283.0 346.7 L282.5 346.1 L282.0 346.7 L281.5 345.8 L281.0 345.8 L280.5 346.2 L280.0 346.0 L279.5 346.5 L279.0 346.0 L278.5 345.7 L278.0 346.1 L277.5 346.0 L277.0 345.8 L276.5 346.5 L276.0 346.6 L275.5 346.3 L275.0 347.0 L274.5 346.1 L274.0 346.2 L273.5 346.2 L273.0 346.0 L272.5 346.6 L272.0 346.9 L271.5 346.0 L271.0 346.8 L270.5 346.8 L270.0 347.1 L269.5 346.5 L269.0 346.2 L268.5 347.0 L268.0 347.3 L267.5 347.2 L267.0 347.3 L266.5 346.9 L266.0 347.3 L265.5 347.1 L265.0 347.4 L264.5 347.2 L264.0 346.7 L263.5 346.9 L263.0 347.6 L262.5 347.4 L262.0 347.3 L261.5 347.0 L261.0 346.8 L260.5 347.3 L260.0 347.2 L259.5 347.5 L259.0 347.6 L258.5 347.5 L258.0 347.5 L257.5 348.3 L257.0 347.9 L256.5 348.4 L256.0 347.9 L255.5 348.0 L255.0 347.8 L254.5 348.4 L254.0 348.7 L253.5 347.9 L253.0 348.7 L252.5 348.0 L252.0 348.4 L251.5 348.8 L251.0 349.1 L250.5 349.4 L250.0 348.9 L249.5 349.4 L249.0 349.0 L248.5 348.7 L248.0 349.3 L247.5 349.5 L247.0 348.9 L246.5 349.1 L246.0 349.4 L245.5 349.6 L245.0 349.8 L244.5 349.8 L244.0 349.8 L243.5 350.1 L243.0 350.1 L242.5 351.2 L242.0 350.6 L241.5 351.4 L241.0 351.5 L240.5 351.6 L240.0 351.9 L239.5 351.5 L239.0 351.2 L238.5 352.1 L238.0 352.6 L237.5 352.0 L237.0 352.9 L236.5 352.2 L236.0 353.1 L235.5 352.7 L235.0 353.8 L234.5 354.0 L234.0 353.6 L233.5 353.6 L233.0 354.0 L232.5 353.7 L232.0 354.3 L231.5 354.6 L231.0 354.9 L230.5 355.6 L230.0 355.5 L229.5 356.3 L229.0 356.6 L228.5 355.9 L228.0 356.8 L227.5 357.3 L227.0 357.3 L226.5 357.1 L226.0 357.7 L225.5 357.6 L225.0 358.9 L224.5 358.4 L224.0 359.5 L223.5 359.9 L223.0 359.7 L222.5 360.3 L222.0 360.4 L221.5 360.7 L221.0 361.4 L220.5 361.5 L220.0 361.6 L219.5 362.3 L219.0 363.0 L218.5 363.1 L218.0 363.5 L217.5 363.9 L217.0 364.7 L216.5 364.4 L216.0 364.6 L215.5 365.7 L215.0 366.6 L214.5 367.1 L214.0 367.0 L213.5 368.0 L213.0 367.9 L212.5 368.6 L212.0 368.7 L211.5 369.2 L211.0 370.5 L210.5 371.1 L210.0 371.2 L209.5 371.0 L209.0 372.2 L208.5 372.9 L208.0 373.6 L207.5 374.2 L207.0 373.9 L206.5 374.5 L206.0 376.0 L205.5 375.9 L205.0 377.0 L204.5 377.6 L204.0 377.8 L203.5 378.7 L203.0 379.2 L202.5 379.9 L202.0 380.2 L201.5 381.3 L201.0 381.0 L200.5 381.6 L200.0 382.4 L199.5 383.7 L199.0 383.7 L198.5 384.5 L198.0 384.6 L197.5 384.9 L197.0 386.0 L196.5 386.8 L196.0 387.4 L195.5 388.1 L195.0 387.7 L194.5 388.8 L194.0 389.2 L193.5 389.1 L193.0 389.7 L192.5 390.1 L192.0 388.9 L191.5 389.1 L191.0 390.0 L190.5 389.1 L190.0 389.2 L189.5 389.0 L189.0 389.5 L188.5 390.1 L188.0 389.0 L187.5 389.3 L187.0 389.1 L186.5 389.9 L186.0 389.3 L185.5 389.1 L185.0 389.0 L184.5 389.1 L184.0 389.0 L183.5 389.7 L183.0 389.4 L182.5 389.9 L182.0 389.8 L181.5 389.0 L181.0 389.6 L180.5 389.7 L180.0 389.6 L179.5 389.4 L179.0 389.2 L178.5 389.5 L178.0 389.2 L177.5 389.1 L177.0 390.0 L176.5 389.4 L176.0 389.9 L175.5 390.0 L175.0 389.4 L174.5 389.9 L174.0 389.2 L173.5 389.8 L173.0 389.0 L172.5 389.5 L172.0 389.7 L171.5 389.2 L171.0 390.1 L170.5 389.7 L170.0 389.7 L169.5 390.0 L169.0 389.4 L168.5 389.6 L168.0 389.3 L167.5 389.6 L167.0 389.7 L166.5 389.5 L166.0 389.8 L165.5 389.0 L165.0 389.2 L164.5 390.0 L164.0 389.6 L163.5 389.7 L163.0 389.3 L162.5 389.6 L162.0 389.4 L161.5 389.1 L161.0 389.0 L160.5 389.3 L160.0 389.6 L159.5 389.9 L159.0 389.0 L158.5 389.2 L158.0 389.0 L157.5 389.4 L157.0 390.0 L156.5 389.2 L156.0 389.9 L155.5 389.0 L155.0 389.4 L154.5 389.5 L154.0 389.3 L153.5 389.0 L153.0 389.1 Z" fill="#dea515"/>
<path d="M468.1 299.6 L468.1 387.4 M509.7 298.4 L509.7 388.6 M299.4 343.0 L299.4 344.0 M521.7 298.3 L521.7 388.7 M226.6 331.2 L226.6 355.8 M483.5 299.0 L483.5 388.0 M531.8 302.4 L531.8 384.6 M205.5 312.1 L205.5 374.9 M416.0 306.4 L416.0 380.6 M201.2 306.8 L201.2 380.2 M436.2 302.4 L436.2 384.6 M708.4 314.7 L708.4 372.3 M507.5 298.5 L507.5 388.5 M612.8 342.6 L612.8 344.4 M639.9 343.0 L639.9 344.0 M227.6 331.8 L227.6 355.2 M790.0 300.3 L790.0 386.7 M617.3 342.7 L617.3 344.3 M219.5 326.3 L219.5 360.7 M687.0 330.7 L687.0 356.3 M405.6 309.5 L405.6 377.5 M263.9 341.8 L263.9 345.2 M770.3 301.3 L770.3 385.7 M515.5 298.4 L515.5 388.6 M651.5 343.1 L651.5 343.9 M241.8 337.9 L241.8 349.1 M652.3 343.1 L652.3 343.9 M191.0 298.3 L191.0 388.7 M306.1 343.0 L306.1 344.0 M393.0 315.1 L393.0 371.9 M163.7 298.3 L163.7 388.7 M535.5 307.0 L535.5 380.0 M290.8 342.9 L290.8 344.1 M346.6 343.1 L346.6 343.9 M608.2 342.4 L608.2 344.6 M427.5 303.8 L427.5 383.2 M724.5 308.3 L724.5 378.7 M552.8 325.5 L552.8 361.5 M713.9 312.1 L713.9 374.9 M515.4 298.4 L515.4 388.6 M743.0 304.1 L743.0 382.9 M713.0 312.5 L713.0 374.5 M261.9 341.6 L261.9 345.4 M632.6 343.0 L632.6 344.0 M373.2 329.8 L373.2 357.2 M644.2 343.0 L644.2 344.0 M590.9 341.0 L590.9 346.0 M684.1 333.9 L684.1 353.1 M232.8 334.5 L232.8 352.5 M393.5 314.9 L393.5 372.1 M627.3 342.9 L627.3 344.1 M762.6 301.8 L762.6 385.2 M617.4 342.7 L617.4 344.3 M181.9 298.3 L181.9 388.7 M541.6 314.3 L541.6 372.7 M218.0 324.9 L218.0 362.1 M506.4 298.5 L506.4 388.5 M669.5 343.1 L669.5 343.9 M226.5 331.2 L226.5 355.8 M748.1 303.4 L748.1 383.6 M587.5 340.5 L587.5 346.5 M317.5 343.1 L317.5 343.9 M278.0 342.6 L278.0 344.4 M440.8 301.8 L440.8 385.2 M692.1 325.8 L692.1 361.2 M527.2 298.0 L527.2 389.0 M226.9 331.4 L226.9 355.6 M167.5 298.3 L167.5 388.7 M224.9 330.2 L224.9 356.8 M668.0 343.1 L668.0 343.9 M272.9 342.4 L272.9 344.6 M509.8 298.4 L509.8 388.6 M340.2 343.1 L340.2 343.9 M595.2 341.5 L595.2 345.5 M398.5 312.4 L398.5 374.6 M246.6 339.2 L246.6 347.8 M716.0 311.2 L716.0 375.8 M499.7 298.6 L499.7 388.4 M596.7 341.6 L596.7 345.4 M672.9 343.1 L672.9 343.9 M763.1 301.8 L763.1 385.2 M162.9 298.3 L162.9 388.7 M373.8 329.2 L373.8 357.8 M250.9 340.1 L250.9 346.9 M476.1 299.3 L476.1 387.7 M714.5 311.8 L714.5 375.2 M667.9 343.1 L667.9 343.9 M176.8 298.3 L176.8 388.7 M271.0 342.3 L271.0 344.7 M679.3 339.8 L679.3 347.2 M590.2 340.9 L590.2 346.1 M406.0 309.4 L406.0 377.6 M459.4 300.1 L459.4 386.9 M255.6 340.8 L255.6 346.2 M696.6 322.1 L696.6 364.9 M406.6 309.2 L406.6 377.8 M714.5 311.9 L714.5 375.1 M546.2 319.3 L546.2 367.7 M202.7 308.7 L202.7 378.3 M365.4 338.6 L365.4 348.4 M292.9 342.9 L292.9 344.1 M727.9 307.3 L727.9 379.7 M532.3 303.0 L532.3 384.0 M182.0 298.3 L182.0 388.7 M263.0 341.7 L263.0 345.3 M385.8 319.5 L385.8 367.5 M454.3 300.5 L454.3 386.5 M524.5 298.3 L524.5 388.7 M403.0 310.5 L403.0 376.5 M381.1 322.9 L381.1 364.1 M157.8 298.3 L157.8 388.7 M525.8 298.3 L525.8 388.7 M368.3 335.1 L368.3 351.9 M167.2 298.3 L167.2 388.7 M448.9 301.0 L448.9 386.0 M787.3 300.4 L787.3 386.6 M183.1 298.3 L183.1 388.7 M247.6 339.4 L247.6 347.6 M584.8 340.0 L584.8 347.0 M329.1 343.1 L329.1 343.9" stroke="#c9920f" stroke-width="0.7" opacity="0.5"/>
<path d="M153 381.5 L797 381.5" stroke="#2a9a40" stroke-width="1" stroke-dasharray="2 3" opacity="0.45"/>
<path d="M623 293 L623 382" stroke="#2a9a40" stroke-width="1" stroke-dasharray="1.5 2"/>
<path d="M153.5 382.2 L155.0 382.4 L156.5 382.2 L158.0 382.5 L159.5 382.4 L161.0 382.8 L162.5 382.8 L164.0 382.0 L165.5 382.5 L167.0 382.6 L168.5 382.7 L170.0 382.6 L171.5 382.5 L173.0 382.5 L174.5 382.3 L176.0 382.2 L177.5 382.7 L179.0 382.7 L180.5 382.8 L182.0 382.6 L183.5 382.2 L185.0 382.6 L186.5 382.6 L188.0 382.4 L189.5 382.5 L191.0 382.3 L192.5 382.4 L194.0 382.3 L195.5 382.0 L197.0 382.3 L198.5 382.2 L200.0 382.8 L201.5 382.4 L203.0 382.3 L204.5 382.2 L206.0 382.2 L207.5 382.3 L209.0 382.1 L210.5 382.0 L212.0 382.7 L213.5 382.4 L215.0 382.4 L216.5 382.5 L218.0 382.2 L219.5 382.1 L221.0 382.0 L222.5 382.2 L224.0 382.2 L225.5 382.6 L227.0 382.4 L228.5 382.8 L230.0 382.3 L231.5 382.8 L233.0 382.5 L234.5 382.0 L236.0 382.1 L237.5 382.5 L239.0 382.8 L240.5 382.3 L242.0 382.6 L243.5 382.3 L245.0 382.7 L246.5 382.0 L248.0 382.4 L249.5 382.8 L251.0 382.2 L252.5 382.2 L254.0 382.0 L255.5 382.1 L257.0 382.2 L258.5 382.6 L260.0 382.1 L261.5 382.3 L263.0 382.1 L264.5 382.5 L266.0 382.7 L267.5 382.5 L269.0 382.1 L270.5 382.6 L272.0 382.8 L273.5 382.5 L275.0 382.0 L276.5 382.7 L278.0 382.7 L279.5 382.3 L281.0 382.1 L282.5 382.1 L284.0 382.4 L285.5 382.7 L287.0 382.5 L288.5 382.8 L290.0 382.1 L291.5 382.2 L293.0 382.6 L294.5 382.5 L296.0 382.3 L297.5 382.6 L299.0 382.3 L300.5 382.0 L302.0 382.3 L303.5 382.0 L305.0 382.5 L306.5 382.3 L308.0 382.4 L309.5 382.5 L311.0 382.2 L312.5 382.4 L314.0 382.0 L315.5 382.8 L317.0 382.5 L318.5 382.8 L320.0 382.0 L321.5 382.5 L323.0 382.6 L324.5 382.2 L326.0 382.0 L327.5 382.1 L329.0 382.1 L330.5 382.6 L332.0 382.0 L333.5 382.7 L335.0 382.3 L336.5 382.4 L338.0 382.5 L339.5 382.4 L341.0 382.5 L342.5 382.5 L344.0 382.2 L345.5 382.6 L347.0 382.2 L348.5 382.6 L350.0 382.6 L351.5 382.6 L353.0 382.2 L354.5 382.6 L356.0 382.8 L357.5 382.4 L359.0 382.2 L360.5 382.4 L362.0 382.8 L363.5 382.1 L365.0 382.0 L366.5 382.4 L368.0 382.5 L369.5 382.6 L371.0 382.3 L372.5 382.8 L374.0 382.2 L375.5 382.6 L377.0 382.0 L378.5 382.0 L380.0 382.1 L381.5 382.0 L383.0 382.4 L384.5 382.4 L386.0 382.1 L387.5 382.8 L389.0 382.3 L390.5 382.1 L392.0 382.1 L393.5 382.6 L395.0 382.8 L396.5 382.1 L398.0 382.0 L399.5 382.7 L401.0 379.4 L402.5 375.6 L404.0 370.6 L405.5 366.2 L407.0 361.4 L408.5 357.2 L410.0 352.4 L411.5 347.7 L413.0 343.7 L414.5 338.5 L416.0 334.5 L417.5 329.3 L419.0 325.3 L420.5 320.6 L422.0 316.4 L423.5 311.2 L425.0 307.1 L426.5 302.4 L428.0 298.3 L429.5 293.8 L431.0 292.9 L432.5 292.6 L434.0 292.6 L435.5 292.6 L437.0 292.7 L438.5 292.6 L440.0 292.5 L441.5 293.0 L443.0 292.9 L444.5 292.6 L446.0 293.2 L447.5 292.5 L449.0 292.9 L450.5 292.5 L452.0 293.1 L453.5 293.1 L455.0 292.6 L456.5 293.0 L458.0 293.1 L459.5 292.6 L461.0 292.6 L462.5 292.8 L464.0 293.2 L465.5 292.5 L467.0 293.0 L468.5 292.9 L470.0 292.8 L471.5 292.9 L473.0 293.1 L474.5 292.5 L476.0 293.1 L477.5 292.7 L479.0 293.1 L480.5 293.1 L482.0 292.5 L483.5 293.1 L485.0 293.2 L486.5 292.6 L488.0 292.4 L489.5 292.5 L491.0 293.2 L492.5 292.4 L494.0 293.2 L495.5 292.5 L497.0 293.0 L498.5 292.4 L500.0 292.5 L501.5 293.0 L503.0 292.4 L504.5 292.7 L506.0 293.2 L507.5 293.0 L509.0 293.1 L510.5 293.2 L512.0 292.4 L513.5 292.6 L515.0 293.1 L516.5 293.0 L518.0 292.4 L519.5 292.8 L521.0 292.6 L522.5 292.7 L524.0 292.4 L525.5 292.4 L527.0 293.2 L528.5 292.6 L530.0 293.1 L531.5 292.5 L533.0 292.8 L534.5 292.5 L536.0 292.7 L537.5 292.5 L539.0 293.0 L540.5 292.5 L542.0 293.0 L543.5 292.8 L545.0 292.5 L546.5 292.7 L548.0 292.8 L549.5 293.2 L551.0 292.7 L552.5 292.5 L554.0 293.2 L555.5 293.1 L557.0 293.0 L558.5 292.6 L560.0 292.5 L561.5 292.6 L563.0 292.4 L564.5 292.4 L566.0 292.8 L567.5 292.7 L569.0 292.9 L570.5 292.7 L572.0 292.4 L573.5 293.0 L575.0 292.9 L576.5 292.8 L578.0 292.8 L579.5 293.0 L581.0 293.2 L582.5 293.1 L584.0 293.0 L585.5 292.7 L587.0 292.6 L588.5 292.7 L590.0 293.2 L591.5 292.7 L593.0 292.7 L594.5 292.7 L596.0 292.5 L597.5 293.2 L599.0 292.4 L600.5 292.9 L602.0 293.2 L603.5 292.6 L605.0 292.9 L606.5 292.7 L608.0 292.6 L609.5 292.5 L611.0 292.5 L612.5 293.1 L614.0 293.1 L615.5 293.2 L617.0 292.4 L618.5 293.0 L620.0 292.6 L621.5 292.9 L623.0 292.8 L624.5 292.6 L626.0 293.2 L627.5 292.4 L629.0 293.0 L630.5 293.1 L632.0 292.8 L633.5 292.9 L635.0 293.2 L636.5 292.6 L638.0 292.9 L639.5 293.0 L641.0 292.7 L642.5 293.0 L644.0 292.7 L645.5 292.8 L647.0 292.9 L648.5 293.0 L650.0 292.6 L651.5 292.9 L653.0 292.8 L654.5 292.6 L656.0 292.9 L657.5 292.6 L659.0 293.2 L660.5 292.8 L662.0 293.0 L663.5 292.8 L665.0 292.8 L666.5 292.5 L668.0 292.5 L669.5 293.2 L671.0 292.8 L672.5 292.8 L674.0 292.8 L675.5 293.1 L677.0 292.6 L678.5 292.5 L680.0 293.1 L681.5 292.8 L683.0 292.9 L684.5 293.1 L686.0 293.2 L687.5 293.1 L689.0 292.4 L690.5 292.7 L692.0 293.1 L693.5 293.1 L695.0 292.5 L696.5 292.5 L698.0 292.6 L699.5 292.4 L701.0 292.7 L702.5 293.1 L704.0 292.8 L705.5 292.8 L707.0 292.4 L708.5 292.7 L710.0 293.2 L711.5 293.0 L713.0 292.8 L714.5 292.8 L716.0 293.1 L717.5 293.0 L719.0 292.5 L720.5 293.0 L722.0 292.7 L723.5 292.8 L725.0 292.6 L726.5 292.7 L728.0 292.7 L729.5 292.7 L731.0 292.4 L732.5 292.5 L734.0 292.9 L735.5 292.4 L737.0 292.5 L738.5 293.0 L740.0 292.6 L741.5 292.6 L743.0 292.6 L744.5 293.1 L746.0 292.4 L747.5 292.9 L749.0 293.1 L750.5 292.5 L752.0 292.7 L753.5 293.1 L755.0 292.9 L756.5 292.7 L758.0 292.4 L759.5 292.7 L761.0 292.7 L762.5 293.0 L764.0 292.6 L765.5 292.7 L767.0 292.9 L768.5 293.1 L770.0 292.7 L771.5 292.7 L773.0 292.9 L774.5 293.2 L776.0 292.5 L777.5 293.2 L779.0 293.0 L780.5 292.7 L782.0 292.9 L783.5 292.6 L785.0 292.4 L786.5 293.0 L788.0 292.7 L789.5 292.8 L791.0 292.8 L792.5 293.2 L794.0 293.0 L795.5 292.4 L797.0 292.9" fill="none" stroke="#22a83a" stroke-width="1.4"/>
<text x="623" y="288.5" font-family='"Liberation Mono", monospace' font-size="10" fill="#2aa040" text-anchor="middle" font-weight="normal" textLength="25.5" lengthAdjust="spacingAndGlyphs">3.04V</text>
<text x="646" y="344.5" font-family='"Liberation Mono", monospace' font-size="10" fill="#2aa040" text-anchor="middle" font-weight="normal" textLength="30" lengthAdjust="spacingAndGlyphs">-3.09V</text>
<text x="623" y="390" font-family='"Liberation Mono", monospace' font-size="10" fill="#2aa040" text-anchor="middle" font-weight="normal" textLength="39.5" lengthAdjust="spacingAndGlyphs">-49.97mV</text>
<text x="796" y="329.8" font-family='"Liberation Mono", monospace' font-size="10.5" fill="#e4e4e4" text-anchor="end" font-weight="normal" textLength="25" lengthAdjust="spacingAndGlyphs">0.59V</text>
<text x="796" y="387" font-family='"Liberation Mono", monospace' font-size="10.5" fill="#e4e4e4" text-anchor="end" font-weight="normal" textLength="29" lengthAdjust="spacingAndGlyphs">-0.01V</text>
<g stroke="#e02a2a" stroke-width="1" stroke-dasharray="1.5 1.5" fill="none"><path d="M192.6 227 L192.6 242"/><path d="M361.3 227 L361.3 242"/><path d="M192.6 234.5 L361.3 234.5"/><path d="M192.6 249.5 L192.6 267"/><path d="M523.5 249.5 L523.5 267"/><path d="M192.6 259.5 L523.5 259.5"/></g>
<text x="200" y="236" font-family='"Liberation Mono", monospace' font-size="10.5" fill="#e02a2a" text-anchor="start" font-weight="bold" textLength="50" lengthAdjust="spacingAndGlyphs">W=+28.25us</text>
<text x="369.4" y="239.5" font-family='"Liberation Mono", monospace' font-size="10.5" fill="#e02a2a" text-anchor="start" font-weight="bold" textLength="40.5" lengthAdjust="spacingAndGlyphs">D=50.99%</text>
<text x="200" y="259.5" font-family='"Liberation Mono", monospace' font-size="10.5" fill="#e02a2a" text-anchor="start" font-weight="bold" textLength="51" lengthAdjust="spacingAndGlyphs">P=+51.48us</text>
<text x="259.7" y="258" font-family='"Liberation Mono", monospace' font-size="10.5" fill="#e02a2a" text-anchor="start" font-weight="bold" textLength="48.5" lengthAdjust="spacingAndGlyphs">F=19.43KHz</text>
<path d="M581 148 Q581 144 585 144 L676 144 Q680 144 680 148 L680 164.6 L581 164.6 Z" fill="#178a2a"/>
<circle cx="591.5" cy="154" r="5" fill="#e0e0e0"/><path d="M591.5 151.3 L593.9 152.7 L593.9 155.3 L591.5 156.7 L589.1 155.3 L589.1 152.7 Z" fill="#6a6a6a"/><circle cx="591.5" cy="154" r="1" fill="#cfcfcf"/>
<path d="M664.3 154 Q669 149.8 673.7 154 Q669 158.2 664.3 154 Z" fill="#f0f0f0"/><circle cx="669" cy="154" r="1.4" fill="#178a2a"/>
<text x="629.5" y="158.8" font-family='"Liberation Mono", monospace' font-size="11" fill="#f4f4f4" text-anchor="middle" font-weight="normal" textLength="15.5" lengthAdjust="spacingAndGlyphs">CH1</text>
<rect x="581" y="164.6" width="99" height="21.0" rx="3.2" fill="#86878c" opacity="0.86"/>
<rect x="581" y="185.6" width="99" height="21.0" rx="3.2" fill="#86878c" opacity="0.86"/>
<rect x="581" y="206.6" width="99" height="20.0" rx="3.2" fill="#86878c" opacity="0.86"/>
<text x="581" y="178.79999999999998" font-family='"Liberation Mono", monospace' font-size="10.5" fill="#44c058" text-anchor="start" font-weight="normal" textLength="63.5" lengthAdjust="spacingAndGlyphs">Freq: 1.00kHz</text>
<text x="581" y="200.7" font-family='"Liberation Mono", monospace' font-size="10.5" fill="#44c058" text-anchor="start" font-weight="normal" textLength="54.5" lengthAdjust="spacingAndGlyphs">Vmax: 3.04V</text>
<text x="581" y="221.7" font-family='"Liberation Mono", monospace' font-size="10.5" fill="#44c058" text-anchor="start" font-weight="normal" textLength="68.5" lengthAdjust="spacingAndGlyphs">Vmin: -41.98mV</text>
<path d="M688.7 148 Q688.7 144 692.7 144 L783.7 144 Q787.7 144 787.7 148 L787.7 164.6 L688.7 164.6 Z" fill="#b98a1a"/>
<circle cx="699.2" cy="154" r="5" fill="#e0e0e0"/><path d="M699.2 151.3 L701.6 152.7 L701.6 155.3 L699.2 156.7 L696.8000000000001 155.3 L696.8000000000001 152.7 Z" fill="#6a6a6a"/><circle cx="699.2" cy="154" r="1" fill="#cfcfcf"/>
<path d="M772.0 154 Q776.7 149.8 781.4000000000001 154 Q776.7 158.2 772.0 154 Z" fill="#f0f0f0"/><circle cx="776.7" cy="154" r="1.4" fill="#b98a1a"/>
<text x="737.2" y="158.8" font-family='"Liberation Mono", monospace' font-size="11" fill="#f4f4f4" text-anchor="middle" font-weight="normal" textLength="15.5" lengthAdjust="spacingAndGlyphs">CH0</text>
<rect x="688.7" y="164.6" width="99" height="21.0" rx="3.2" fill="#86878c" opacity="0.86"/>
<rect x="688.7" y="185.6" width="99" height="21.0" rx="3.2" fill="#86878c" opacity="0.86"/>
<rect x="688.7" y="206.6" width="99" height="20.0" rx="3.2" fill="#86878c" opacity="0.86"/>
<text x="688.7" y="178.79999999999998" font-family='"Liberation Mono", monospace' font-size="10.5" fill="#f2c838" text-anchor="start" font-weight="normal" textLength="63.5" lengthAdjust="spacingAndGlyphs">Freq: 6.25MHz</text>
<text x="688.7" y="200.7" font-family='"Liberation Mono", monospace' font-size="10.5" fill="#f2c838" text-anchor="start" font-weight="normal" textLength="54.5" lengthAdjust="spacingAndGlyphs">Vmax: 1.59V</text>
<text x="688.7" y="221.7" font-family='"Liberation Mono", monospace' font-size="10.5" fill="#f2c838" text-anchor="start" font-weight="normal" textLength="59.5" lengthAdjust="spacingAndGlyphs">Vmin: -1.54V</text>
<path d="M128.4 336.4 L145 336.4 L152.8 344.4 L145 352.4 L128.4 352.4 Z" fill="#e6aa18"/>
<text x="136.5" y="347.9" font-family='"Liberation Mono", monospace' font-size="10" fill="#f0f0f0" text-anchor="middle" font-weight="normal" textLength="5" lengthAdjust="spacingAndGlyphs">0</text>
<path d="M128.4 373 L145 373 L152.8 381 L145 389 L128.4 389 Z" fill="#1a9c32"/>
<text x="136.5" y="384.5" font-family='"Liberation Mono", monospace' font-size="10" fill="#f0f0f0" text-anchor="middle" font-weight="normal" textLength="5" lengthAdjust="spacingAndGlyphs">1</text>
<path d="M822 318 L806 318 L798 326.2 L806 334.4 L822 334.4 Z" fill="#e6aa18"/>
<text x="812.5" y="330" font-family='"Liberation Mono", monospace' font-size="10" fill="#f0f0f0" text-anchor="middle" font-weight="normal" textLength="5" lengthAdjust="spacingAndGlyphs">T</text>
<path d="M822 373 L806 373 L798 381.2 L806 389.4 L822 389.4 Z" fill="#1a9c32"/>
<text x="812.5" y="385" font-family='"Liberation Mono", monospace' font-size="10" fill="#f0f0f0" text-anchor="middle" font-weight="normal" textLength="5" lengthAdjust="spacingAndGlyphs">T</text>
<rect x="153" y="443" width="644" height="117" fill="#1c1e25"/>
<rect x="153" y="440" width="644" height="1.2" fill="#4a4a46"/>
<rect x="153" y="441.4" width="644" height="1.7" fill="#888"/>
<rect x="153" y="443" width="1.2" height="111" fill="#8a8a8a"/>
<rect x="796.2" y="443" width="1" height="111" fill="#9a9a9a"/>
<g stroke="#a8a8a8" stroke-width="1"><path d="M153.5 443 L153.5 455.5"/><path d="M166.4 443 L166.4 448.5"/><path d="M179.3 443 L179.3 448.5"/><path d="M192.1 443 L192.1 448.5"/><path d="M205.0 443 L205.0 448.5"/><path d="M217.9 443 L217.9 448.5"/><path d="M230.8 443 L230.8 448.5"/><path d="M243.7 443 L243.7 448.5"/><path d="M256.5 443 L256.5 448.5"/><path d="M269.4 443 L269.4 448.5"/><path d="M282.3 443 L282.3 455.5"/><path d="M295.2 443 L295.2 448.5"/><path d="M308.1 443 L308.1 448.5"/><path d="M320.9 443 L320.9 448.5"/><path d="M333.8 443 L333.8 448.5"/><path d="M346.7 443 L346.7 448.5"/><path d="M359.6 443 L359.6 448.5"/><path d="M372.5 443 L372.5 448.5"/><path d="M385.3 443 L385.3 448.5"/><path d="M398.2 443 L398.2 448.5"/><path d="M411.1 443 L411.1 455.5"/><path d="M424.0 443 L424.0 448.5"/><path d="M436.9 443 L436.9 448.5"/><path d="M449.7 443 L449.7 448.5"/><path d="M462.6 443 L462.6 448.5"/><path d="M475.5 443 L475.5 448.5"/><path d="M488.4 443 L488.4 448.5"/><path d="M501.3 443 L501.3 448.5"/><path d="M514.1 443 L514.1 448.5"/><path d="M527.0 443 L527.0 448.5"/><path d="M539.9 443 L539.9 455.5"/><path d="M552.8 443 L552.8 448.5"/><path d="M565.7 443 L565.7 448.5"/><path d="M578.5 443 L578.5 448.5"/><path d="M591.4 443 L591.4 448.5"/><path d="M604.3 443 L604.3 448.5"/><path d="M617.2 443 L617.2 448.5"/><path d="M630.1 443 L630.1 448.5"/><path d="M642.9 443 L642.9 448.5"/><path d="M655.8 443 L655.8 448.5"/><path d="M668.7 443 L668.7 455.5"/><path d="M681.6 443 L681.6 448.5"/><path d="M694.5 443 L694.5 448.5"/><path d="M707.3 443 L707.3 448.5"/><path d="M720.2 443 L720.2 448.5"/><path d="M733.1 443 L733.1 448.5"/><path d="M746.0 443 L746.0 448.5"/><path d="M758.9 443 L758.9 448.5"/><path d="M771.7 443 L771.7 448.5"/><path d="M784.6 443 L784.6 448.5"/><path d="M797.5 443 L797.5 455.5"/></g>
<text x="282.2" y="463.2" font-family='"Liberation Mono", monospace' font-size="10" fill="#c8c8c8" text-anchor="middle" font-weight="normal" textLength="39.5" lengthAdjust="spacingAndGlyphs">10.00MHz</text>
<text x="411.0" y="463.2" font-family='"Liberation Mono", monospace' font-size="10" fill="#c8c8c8" text-anchor="middle" font-weight="normal" textLength="39.5" lengthAdjust="spacingAndGlyphs">20.00MHz</text>
<text x="539.8" y="463.2" font-family='"Liberation Mono", monospace' font-size="10" fill="#c8c8c8" text-anchor="middle" font-weight="normal" textLength="39.5" lengthAdjust="spacingAndGlyphs">30.00MHz</text>
<text x="668.6" y="463.2" font-family='"Liberation Mono", monospace' font-size="10" fill="#c8c8c8" text-anchor="middle" font-weight="normal" textLength="39.5" lengthAdjust="spacingAndGlyphs">40.00MHz</text>
<text x="785" y="468.0" font-family='"Liberation Mono", monospace' font-size="10" fill="#c8c8c8" text-anchor="end" font-weight="normal" textLength="40.0" lengthAdjust="spacingAndGlyphs">-6.02dbv</text>
<path d="M790 464.5 L797 464.5" stroke="#c8c8c8" stroke-width="1"/>
<text x="785" y="490.2" font-family='"Liberation Mono", monospace' font-size="10" fill="#c8c8c8" text-anchor="end" font-weight="normal" textLength="45.0" lengthAdjust="spacingAndGlyphs">-26.02dbv</text>
<path d="M790 486.7 L797 486.7" stroke="#c8c8c8" stroke-width="1"/>
<text x="785" y="512.4" font-family='"Liberation Mono", monospace' font-size="10" fill="#c8c8c8" text-anchor="end" font-weight="normal" textLength="45.0" lengthAdjust="spacingAndGlyphs">-46.02dbv</text>
<path d="M790 508.9 L797 508.9" stroke="#c8c8c8" stroke-width="1"/>
<text x="785" y="534.6" font-family='"Liberation Mono", monospace' font-size="10" fill="#c8c8c8" text-anchor="end" font-weight="normal" textLength="45.0" lengthAdjust="spacingAndGlyphs">-66.02dbv</text>
<path d="M790 531.1 L797 531.1" stroke="#c8c8c8" stroke-width="1"/>
<path d="M153.5 554 L153.5 503.0 L154.4 516.7 L155.3 508.4 L156.2 523.0 L157.1 514.3 L158.0 525.3 L158.9 523.2 L159.8 533.1 L160.7 516.5 L161.6 537.2 L162.5 532.7 L163.4 534.6 L164.3 528.3 L165.2 540.9 L166.1 527.3 L167.0 540.3 L167.9 521.9 L168.8 539.9 L169.7 521.2 L170.6 537.3 L171.5 531.2 L172.4 540.9 L173.3 533.5 L174.2 536.5 L175.1 519.7 L176.0 536.0 L176.9 528.6 L177.8 535.8 L178.7 533.4 L179.6 538.1 L180.5 523.0 L181.4 541.3 L182.3 532.9 L183.2 535.8 L184.1 519.9 L185.0 536.9 L185.9 530.2 L186.8 538.8 L187.7 529.4 L188.6 535.3 L189.5 533.9 L190.4 534.0 L191.3 529.0 L192.2 537.2 L193.1 531.0 L194.0 536.0 L194.9 532.9 L195.8 539.9 L196.7 532.9 L197.6 537.6 L198.5 534.0 L199.4 541.4 L200.3 527.0 L201.2 539.3 L202.1 526.9 L203.0 534.1 L203.9 531.3 L204.8 541.8 L205.7 531.0 L206.6 538.0 L207.5 531.9 L208.4 536.2 L209.3 528.2 L210.2 534.8 L211.1 533.8 L212.0 534.4 L212.9 527.3 L213.8 542.1 L214.7 529.8 L215.6 535.8 L216.5 533.7 L217.4 534.9 L218.3 527.0 L219.2 533.9 L220.1 533.2 L221.0 535.6 L221.9 531.2 L222.8 538.5 L223.7 527.7 L224.6 536.4 L225.5 533.2 L226.4 540.7 L227.3 534.3 L228.2 533.8 L229.1 529.5 L230.0 535.5 L230.9 530.9 L231.8 537.7 L232.7 532.3 L233.6 539.6 L234.5 527.4 L235.4 534.6 L236.3 533.9 L237.2 542.0 L238.1 530.7 L239.0 536.6 L239.9 532.5 L240.8 541.9 L241.7 527.2 L242.6 541.3 L243.5 531.3 L244.4 534.3 L245.3 527.6 L246.2 541.5 L247.1 533.3 L248.0 541.8 L248.9 526.8 L249.8 542.2 L250.7 529.3 L251.6 539.4 L252.5 526.9 L253.4 537.5 L254.3 528.5 L255.2 535.1 L256.1 532.8 L257.0 534.1 L257.9 531.0 L258.8 538.5 L259.7 532.8 L260.6 537.7 L261.5 526.8 L262.4 534.4 L263.3 531.7 L264.2 538.7 L265.1 529.3 L266.0 539.5 L266.9 527.8 L267.8 542.0 L268.7 529.2 L269.6 541.4 L270.5 530.3 L271.4 534.3 L272.3 533.5 L273.2 538.0 L274.1 530.8 L275.0 537.7 L275.9 527.8 L276.8 538.1 L277.7 554.0 L278.6 554.0 L279.5 554.0 L280.4 554.0 L281.3 554.0 L282.2 554.0 L283.1 554.0 L284.0 554.0 L284.9 554.0 L285.8 554.0 L286.7 554.0 L287.6 554.0 L288.5 521.3 L289.4 538.2 L290.3 528.8 L291.2 534.3 L292.1 531.1 L293.0 538.9 L293.9 532.8 L294.8 534.1 L295.7 528.5 L296.6 542.3 L297.5 526.8 L298.4 539.7 L299.3 533.0 L300.2 540.8 L301.1 530.2 L302.0 533.6 L302.9 534.0 L303.8 537.2 L304.7 527.2 L305.6 540.1 L306.5 531.9 L307.4 536.6 L308.3 527.6 L309.2 535.5 L310.1 529.1 L311.0 542.5 L311.9 532.8 L312.8 538.0 L313.7 532.7 L314.6 540.3 L315.5 531.6 L316.4 539.1 L317.3 533.3 L318.2 534.3 L319.1 532.2 L320.0 535.0 L320.9 534.2 L321.8 540.2 L322.7 527.6 L323.6 541.9 L324.5 533.7 L325.4 541.0 L326.3 532.9 L327.2 537.4 L328.1 533.1 L329.0 541.3 L329.9 528.9 L330.8 538.3 L331.7 534.1 L332.6 542.2 L333.5 532.8 L334.4 541.0 L335.3 528.4 L336.2 537.6 L337.1 528.4 L338.0 541.7 L338.9 532.0 L339.8 537.0 L340.7 532.8 L341.6 539.6 L342.5 534.0 L343.4 537.2 L344.3 527.2 L345.2 541.0 L346.1 529.2 L347.0 541.0 L347.9 524.9 L348.8 533.6 L349.7 527.4 L350.6 537.3 L351.5 531.3 L352.4 536.5 L353.3 528.2 L354.2 541.1 L355.1 531.5 L356.0 534.3 L356.9 528.7 L357.8 537.5 L358.7 531.8 L359.6 534.6 L360.5 522.0 L361.4 535.2 L362.3 528.7 L363.2 536.8 L364.1 528.3 L365.0 539.0 L365.9 533.7 L366.8 538.0 L367.7 534.1 L368.6 542.4 L369.5 528.0 L370.4 535.0 L371.3 524.7 L372.2 542.0 L373.1 530.1 L374.0 535.8 L374.9 529.3 L375.8 538.5 L376.7 533.4 L377.6 536.9 L378.5 533.9 L379.4 539.5 L380.3 527.1 L381.2 537.5 L382.1 534.2 L383.0 539.5 L383.9 531.6 L384.8 538.2 L385.7 531.9 L386.6 538.0 L387.5 529.4 L388.4 534.0 L389.3 533.2 L390.2 538.5 L391.1 530.1 L392.0 541.5 L392.9 532.3 L393.8 533.8 L394.7 529.1 L395.6 542.1 L396.5 533.6 L397.4 538.8 L398.3 523.8 L399.2 540.2 L400.1 531.6 L401.0 540.3 L401.9 528.7 L402.8 537.0 L403.7 533.7 L404.6 539.6 L405.5 529.9 L406.4 539.1 L407.3 527.7 L408.2 530.3 L409.1 521.1 L410.0 533.9 L410.9 526.2 L411.8 529.0 L412.7 526.2 L413.6 531.8 L414.5 530.4 L415.4 535.2 L416.3 526.3 L417.2 536.7 L418.1 534.1 L419.0 535.1 L419.9 529.0 L420.8 535.3 L421.7 529.1 L422.6 534.5 L423.5 528.6 L424.4 537.0 L425.3 534.2 L426.2 535.3 L427.1 533.8 L428.0 541.0 L428.9 531.6 L429.8 536.3 L430.7 527.7 L431.6 537.7 L432.5 531.0 L433.4 540.3 L434.3 528.7 L435.2 541.8 L436.1 530.7 L437.0 539.2 L437.9 528.6 L438.8 533.9 L439.7 533.1 L440.6 536.7 L441.5 534.0 L442.4 535.7 L443.3 527.1 L444.2 540.3 L445.1 531.9 L446.0 540.8 L446.9 527.4 L447.8 539.3 L448.7 534.2 L449.6 539.7 L450.5 532.7 L451.4 542.0 L452.3 532.4 L453.2 537.0 L454.1 532.9 L455.0 535.2 L455.9 533.5 L456.8 538.2 L457.7 531.9 L458.6 534.7 L459.5 521.7 L460.4 538.0 L461.3 533.3 L462.2 538.7 L463.1 529.7 L464.0 536.0 L464.9 533.3 L465.8 541.0 L466.7 527.7 L467.6 540.3 L468.5 530.5 L469.4 541.6 L470.3 532.4 L471.2 539.3 L472.1 533.5 L473.0 539.8 L473.9 532.1 L474.8 536.0 L475.7 527.0 L476.6 540.9 L477.5 528.7 L478.4 535.5 L479.3 527.3 L480.2 542.3 L481.1 532.9 L482.0 539.8 L482.9 527.1 L483.8 536.4 L484.7 526.5 L485.6 534.7 L486.5 521.0 L487.4 538.5 L488.3 523.0 L489.2 534.5 L490.1 528.3 L491.0 536.6 L491.9 529.1 L492.8 535.5 L493.7 532.8 L494.6 541.1 L495.5 533.0 L496.4 533.8 L497.3 524.7 L498.2 537.3 L499.1 527.0 L500.0 540.0 L500.9 531.2 L501.8 538.1 L502.7 531.2 L503.6 541.3 L504.5 534.5 L505.4 542.2 L506.3 529.1 L507.2 534.1 L508.1 530.3 L509.0 537.6 L509.9 532.0 L510.8 537.6 L511.7 529.2 L512.6 537.1 L513.5 528.8 L514.4 540.1 L515.3 530.6 L516.2 535.3 L517.1 532.1 L518.0 535.9 L518.9 531.0 L519.8 542.3 L520.7 532.5 L521.6 541.8 L522.5 532.3 L523.4 534.1 L524.3 518.0 L525.2 540.0 L526.1 531.5 L527.0 536.7 L527.9 527.8 L528.8 542.4 L529.7 522.9 L530.6 536.6 L531.5 533.5 L532.4 537.1 L533.3 526.4 L534.2 533.2 L535.1 530.0 L536.0 538.4 L536.9 528.5 L537.8 531.4 L538.7 526.1 L539.6 527.6 L540.5 524.9 L541.4 530.5 L542.3 514.5 L543.2 537.6 L544.1 532.7 L545.0 536.7 L545.9 532.0 L546.8 540.7 L547.7 533.2 L548.6 533.6 L549.5 528.2 L550.4 536.9 L551.3 526.6 L552.2 540.6 L553.1 519.9 L554.0 538.3 L554.9 527.1 L555.8 539.1 L556.7 533.6 L557.6 539.3 L558.5 528.1 L559.4 541.7 L560.3 529.6 L561.2 538.8 L562.1 527.5 L563.0 537.6 L563.9 531.2 L564.8 539.9 L565.7 520.7 L566.6 534.0 L567.5 530.3 L568.4 539.6 L569.3 532.2 L570.2 539.3 L571.1 532.0 L572.0 534.8 L572.9 533.8 L573.8 534.1 L574.7 528.4 L575.6 535.6 L576.5 529.6 L577.4 540.9 L578.3 531.6 L579.2 533.8 L580.1 527.3 L581.0 540.7 L581.9 520.4 L582.8 541.9 L583.7 528.3 L584.6 541.9 L585.5 531.6 L586.4 535.9 L587.3 518.2 L588.2 534.4 L589.1 534.3 L590.0 535.2 L590.9 533.0 L591.8 538.1 L592.7 527.3 L593.6 541.5 L594.5 523.7 L595.4 538.5 L596.3 533.1 L597.2 539.1 L598.1 531.3 L599.0 534.2 L599.9 526.9 L600.8 536.1 L601.7 520.2 L602.6 533.7 L603.5 533.1 L604.4 537.6 L605.3 527.5 L606.2 535.4 L607.1 529.9 L608.0 542.3 L608.9 530.9 L609.8 534.3 L610.7 532.3 L611.6 541.1 L612.5 527.3 L613.4 536.2 L614.3 532.6 L615.2 539.0 L616.1 534.3 L617.0 533.6 L617.9 527.1 L618.8 539.7 L619.7 531.3 L620.6 537.6 L621.5 529.8 L622.4 539.3 L623.3 533.8 L624.2 540.7 L625.1 533.8 L626.0 540.0 L626.9 526.7 L627.8 541.1 L628.7 529.9 L629.6 535.1 L630.5 534.0 L631.4 539.9 L632.3 528.5 L633.2 536.6 L634.1 529.1 L635.0 537.5 L635.9 534.3 L636.8 541.9 L637.7 532.6 L638.6 542.4 L639.5 532.5 L640.4 535.7 L641.3 523.4 L642.2 541.5 L643.1 533.9 L644.0 540.4 L644.9 532.7 L645.8 540.7 L646.7 530.8 L647.6 540.9 L648.5 529.0 L649.4 536.8 L650.3 530.8 L651.2 535.0 L652.1 530.7 L653.0 538.3 L653.9 534.0 L654.8 541.7 L655.7 532.0 L656.6 534.3 L657.5 528.2 L658.4 541.6 L659.3 526.5 L660.2 539.8 L661.1 534.1 L662.0 536.7 L662.9 530.6 L663.8 537.9 L664.7 529.0 L665.6 530.9 L666.5 520.6 L667.4 528.5 L668.3 521.6 L669.2 532.9 L670.1 525.9 L671.0 534.9 L671.9 529.4 L672.8 532.4 L673.7 518.9 L674.6 534.3 L675.5 527.2 L676.4 542.1 L677.3 532.0 L678.2 540.4 L679.1 527.9 L680.0 536.2 L680.9 529.8 L681.8 537.5 L682.7 532.3 L683.6 541.9 L684.5 529.2 L685.4 533.8 L686.3 533.1 L687.2 541.2 L688.1 532.9 L689.0 536.0 L689.9 526.6 L690.8 541.6 L691.7 527.8 L692.6 538.8 L693.5 531.8 L694.4 534.8 L695.3 527.3 L696.2 536.9 L697.1 531.7 L698.0 535.5 L698.9 516.9 L699.8 534.7 L700.7 534.2 L701.6 540.0 L702.5 527.6 L703.4 535.8 L704.3 529.4 L705.2 534.5 L706.1 528.5 L707.0 536.1 L707.9 529.5 L708.8 535.5 L709.7 528.1 L710.6 537.0 L711.5 529.4 L712.4 537.7 L713.3 524.5 L714.2 541.0 L715.1 520.7 L716.0 534.5 L716.9 530.2 L717.8 534.3 L718.7 527.4 L719.6 535.1 L720.5 528.3 L721.4 534.6 L722.3 527.0 L723.2 537.7 L724.1 534.0 L725.0 534.1 L725.9 528.3 L726.8 538.6 L727.7 533.5 L728.6 541.2 L729.5 527.4 L730.4 538.2 L731.3 528.4 L732.2 541.3 L733.1 528.2 L734.0 535.9 L734.9 533.9 L735.8 540.1 L736.7 527.1 L737.6 536.4 L738.5 528.1 L739.4 536.8 L740.3 527.5 L741.2 537.8 L742.1 519.0 L743.0 538.1 L743.9 526.7 L744.8 540.2 L745.7 530.8 L746.6 538.0 L747.5 531.3 L748.4 534.8 L749.3 532.9 L750.2 540.2 L751.1 533.4 L752.0 541.6 L752.9 528.0 L753.8 538.9 L754.7 533.7 L755.6 535.5 L756.5 526.8 L757.4 534.8 L758.3 528.0 L759.2 538.7 L760.1 534.0 L761.0 539.6 L761.9 526.6 L762.8 535.6 L763.7 530.3 L764.6 542.0 L765.5 530.4 L766.4 539.1 L767.3 528.2 L768.2 535.3 L769.1 534.5 L770.0 535.5 L770.9 534.2 L771.8 537.2 L772.7 529.2 L773.6 533.7 L774.5 529.5 L775.4 541.0 L776.3 526.5 L777.2 535.8 L778.1 530.1 L779.0 539.9 L779.9 527.6 L780.8 534.6 L781.7 534.2 L782.6 534.7 L783.5 530.7 L784.4 541.5 L785.3 527.0 L786.2 535.0 L787.1 531.2 L788.0 537.2 L788.9 533.6 L789.8 541.2 L790.7 534.2 L791.6 542.0 L792.5 519.3 L793.4 533.0 L794.3 522.1 L795.2 528.4 L796.1 523.4 L797.0 523.3 L797 554 Z" fill="#e6aa18"/>
<path d="M494.3 547.0 L494.3 553.2 M573.5 540.3 L573.5 544.5 M311.8 543.2 L311.8 550.8 M667.9 548.0 L667.9 553.9 M204.6 548.0 L204.6 552.7 M272.0 543.8 L272.0 548.7 M307.2 537.3 L307.2 547.5 M588.9 531.5 L588.9 548.9 M554.9 539.4 L554.9 550.2 M666.9 530.2 L666.9 543.1 M589.2 544.2 L589.2 551.6 M271.2 549.2 L271.2 553.6 M304.8 538.6 L304.8 553.5 M288.4 538.2 L288.4 553.5 M731.2 534.6 L731.2 549.7 M385.8 543.3 L385.8 552.2 M237.5 534.5 L237.5 541.0 M326.0 530.7 L326.0 536.5 M415.5 538.4 L415.5 542.4 M528.1 548.8 L528.1 553.1 M383.3 544.1 L383.3 550.1 M268.1 539.6 L268.1 542.8 M587.9 533.2 L587.9 542.8 M771.0 545.3 L771.0 553.1 M566.3 542.7 L566.3 551.5 M773.5 533.9 L773.5 550.0 M348.2 535.1 L348.2 551.2 M540.1 547.0 L540.1 553.5 M532.2 534.0 L532.2 537.2 M497.8 544.5 L497.8 549.3 M200.8 530.1 L200.8 536.7 M600.7 530.1 L600.7 537.9 M325.4 544.2 L325.4 553.9 M168.3 532.3 L168.3 552.8 M775.8 533.0 L775.8 542.0 M489.8 536.4 L489.8 545.5 M462.0 535.2 L462.0 539.0 M209.6 533.2 L209.6 537.9 M554.8 543.9 L554.8 548.8 M661.9 544.6 L661.9 549.8 M470.3 533.8 L470.3 552.8 M514.1 531.0 L514.1 537.1 M598.6 537.7 L598.6 550.2 M302.6 545.9 L302.6 553.0 M216.2 541.7 L216.2 546.5 M608.3 546.1 L608.3 553.0 M303.8 531.9 L303.8 547.6 M517.1 532.8 L517.1 539.3 M528.2 532.2 L528.2 547.1 M309.9 535.2 L309.9 544.9 M496.7 544.5 L496.7 547.7 M618.9 534.4 L618.9 542.2 M564.8 543.8 L564.8 551.2 M732.3 534.1 L732.3 542.4 M579.3 535.2 L579.3 540.7 M300.6 545.4 L300.6 553.0 M613.7 549.2 L613.7 553.6 M353.9 536.3 L353.9 549.9 M191.6 542.2 L191.6 546.0 M187.4 540.3 L187.4 544.9 M751.3 547.5 L751.3 552.1 M232.4 540.1 L232.4 548.8 M387.9 544.3 L387.9 550.9 M651.5 532.1 L651.5 536.4 M403.3 539.7 L403.3 545.5 M583.2 534.4 L583.2 542.7 M460.7 544.2 L460.7 552.4 M393.5 538.9 L393.5 553.1 M752.8 542.4 L752.8 546.3 M447.2 542.7 L447.2 548.0 M179.9 549.6 L179.9 553.9 M238.4 539.3 L238.4 549.6 M347.7 531.4 L347.7 549.1 M648.5 538.7 L648.5 542.8 M407.7 531.9 L407.7 553.3 M188.7 535.8 L188.7 550.5 M242.3 532.1 L242.3 536.5 M260.8 540.6 L260.8 552.3 M264.1 533.5 L264.1 549.9 M428.1 536.8 L428.1 541.5 M311.2 549.4 L311.2 552.6 M321.9 544.8 L321.9 553.3 M733.8 539.5 L733.8 553.5 M542.0 535.8 L542.0 545.9 M613.5 544.7 L613.5 548.5 M768.3 532.1 L768.3 550.5 M372.5 535.0 L372.5 542.1 M455.8 549.8 L455.8 553.0 M702.0 536.4 L702.0 541.9 M631.9 536.8 L631.9 542.5 M423.4 546.4 L423.4 553.4 M523.4 530.2 L523.4 549.1 M543.6 548.0 L543.6 553.9 M365.0 547.0 L365.0 553.3 M326.0 537.3 L326.0 545.4 M381.5 537.6 L381.5 542.0 M301.1 548.2 L301.1 552.3 M562.3 547.7 L562.3 553.2 M312.2 548.4 L312.2 553.5 M789.0 544.6 L789.0 552.4 M675.5 535.1 L675.5 548.5 M399.2 546.8 L399.2 550.4 M500.5 536.7 L500.5 551.4 M376.6 546.9 L376.6 553.4 M717.6 532.8 L717.6 552.9 M631.6 543.5 L631.6 551.4 M186.7 547.4 L186.7 552.4 M447.2 536.8 L447.2 550.9 M655.8 547.4 L655.8 551.2 M373.5 535.0 L373.5 539.6 M365.0 530.5 L365.0 549.8 M301.1 531.4 L301.1 535.7 M629.6 534.0 L629.6 544.8 M412.8 546.0 L412.8 553.8 M354.0 542.6 L354.0 553.1 M456.6 548.0 L456.6 553.2 M355.1 547.5 L355.1 552.5 M223.7 541.7 L223.7 552.4 M487.3 539.7 L487.3 547.4 M718.6 543.3 L718.6 547.9 M387.5 537.3 L387.5 553.4 M600.7 532.5 L600.7 552.4 M178.3 541.8 L178.3 548.8 M614.5 538.6 L614.5 542.7 M490.6 546.4 L490.6 553.0 M383.9 534.4 L383.9 549.8 M668.3 534.4 L668.3 552.1 M790.2 538.7 L790.2 546.4 M609.6 548.6 L609.6 552.1 M348.8 536.6 L348.8 550.1 M275.4 540.9 L275.4 549.0 M583.1 532.9 L583.1 553.2 M795.0 541.2 L795.0 552.0 M273.2 548.2 L273.2 552.7 M641.3 547.4 L641.3 551.7 M746.4 534.1 L746.4 537.5 M477.0 548.0 L477.0 553.7 M766.2 540.2 L766.2 553.3 M513.8 532.9 L513.8 547.3 M669.4 538.5 L669.4 549.0 M321.6 535.5 L321.6 545.0 M484.0 539.4 L484.0 543.4 M159.6 536.8 L159.6 550.0 M634.2 534.7 L634.2 541.9 M486.2 533.5 L486.2 547.1 M733.7 534.0 L733.7 547.0 M616.6 545.0 L616.6 552.3 M610.1 535.5 L610.1 551.5 M747.1 531.1 L747.1 552.9 M438.8 531.7 L438.8 536.1 M665.2 543.6 L665.2 547.6 M449.9 542.8 L449.9 554.0 M370.7 545.3 L370.7 549.7 M259.0 538.2 L259.0 549.1 M349.7 533.2 L349.7 540.1 M210.3 533.9 L210.3 542.3 M478.4 533.7 L478.4 545.0 M437.0 549.5 L437.0 553.2 M759.7 539.4 L759.7 544.7 M534.3 532.9 L534.3 539.0 M202.8 544.0 L202.8 553.8 M413.8 537.1 L413.8 546.0 M380.9 543.8 L380.9 549.6 M253.3 547.3 L253.3 552.4 M160.1 547.0 L160.1 552.9 M382.5 542.6 L382.5 553.3 M412.7 538.7 L412.7 545.3 M510.1 543.3 L510.1 551.9 M762.6 532.9 L762.6 542.5 M700.2 545.8 L700.2 551.9 M588.8 536.8 L588.8 553.2 M507.1 538.1 L507.1 543.4 M229.8 548.0 L229.8 553.4 M173.1 536.5 L173.1 546.4 M472.8 537.3 L472.8 552.6 M379.5 540.6 L379.5 553.3 M564.4 539.5 L564.4 546.4 M403.4 542.2 L403.4 552.1 M322.5 537.4 L322.5 545.7 M387.9 548.3 L387.9 552.7 M332.2 536.6 L332.2 551.4 M258.4 543.8 L258.4 547.0 M194.0 546.1 L194.0 549.8 M301.7 531.2 L301.7 539.4 M624.7 544.4 L624.7 553.4 M761.1 541.0 L761.1 553.2 M213.2 548.5 L213.2 552.6 M634.0 547.2 L634.0 551.6 M215.5 547.5 L215.5 553.1 M537.5 549.5 L537.5 552.6 M191.7 532.5 L191.7 535.9 M608.6 542.6 L608.6 546.5 M259.5 533.6 L259.5 547.2 M585.7 549.4 L585.7 553.0" stroke="#1c1e25" stroke-width="0.8" opacity="0.55"/>
<text x="796" y="551.5" font-family='"Liberation Mono", monospace' font-size="9.5" fill="#b0b0b0" text-anchor="end" font-weight="normal" textLength="81" lengthAdjust="spacingAndGlyphs" opacity="0.9">ΔFreq: 6.100000Hz</text>
<path d="M282.6 443 L282.6 554" stroke="#b0b0b0" stroke-width="1" stroke-dasharray="2 2"/>
<path d="M276.2 532 L280.2 510 L282.2 470 L282.6 460 L283.2 470 L285 510 L289.2 532" fill="none" stroke="#e6aa18" stroke-width="1.7" stroke-linejoin="round"/>
<path d="M277.5 530 L281.5 503 L282.6 480 L283.8 503 L287.8 530" fill="none" stroke="#e6aa18" stroke-width="1" opacity="0.6"/>
<circle cx="283" cy="495.7" r="2.4" fill="#b0b0b0"/>
<text x="286.7" y="494.8" font-family='"Liberation Mono", monospace' font-size="10" fill="#cfcfcf" text-anchor="start" font-weight="normal" textLength="105" lengthAdjust="spacingAndGlyphs">-34.4658dbv@10.1013MHz</text>
<rect x="3" y="544.4" width="8.7" height="16.8" fill="#e6aa18"/>
<text x="12.5" y="557" font-family='"Liberation Mono", monospace' font-size="10" fill="#c8c8c8" text-anchor="start" font-weight="normal" textLength="29" lengthAdjust="spacingAndGlyphs">FFT(0)</text>
<path d="M128.4 544.6 L145 544.6 L153 552.9 L145 561.2 L128.4 561.2 Z" fill="#e6aa18"/>
<text x="136.5" y="556" font-family='"Liberation Mono", monospace' font-size="8.5" fill="#f0f0f0" text-anchor="middle" font-weight="normal" textLength="5" lengthAdjust="spacingAndGlyphs">M</text>
<rect x="0" y="565" width="822" height="12" fill="#282828"/>
<path d="M11.5 564.8 L5.5 568 L11.5 571.2 Z" fill="#b0b0b0"/>
<rect x="21.5" y="564.4" width="12" height="7.6" rx="3.8" fill="#6a6a6a"/>
<path d="M811.7 563.5 L817.5 567.3 L811.7 571 Z" fill="#b0b0b0"/>
<rect x="14" y="159" width="29.2" height="16.8" fill="#e6aa18"/>
<text x="28.6" y="170.70000000000002" font-family='"Liberation Mono", monospace' font-size="9.5" fill="#f0f0f0" text-anchor="middle" font-weight="normal" textLength="9" lengthAdjust="spacingAndGlyphs">x1</text>
<rect x="14" y="178.2" width="29.2" height="16.8" fill="#6e6e6e"/>
<text x="28.6" y="189.9" font-family='"Liberation Mono", monospace' font-size="9.5" fill="#f0f0f0" text-anchor="middle" font-weight="normal" textLength="14.5" lengthAdjust="spacingAndGlyphs">x10</text>
<rect x="14" y="198.4" width="29.2" height="16.9" fill="#6e6e6e"/>
<text x="28.6" y="210.15" font-family='"Liberation Mono", monospace' font-size="9.5" fill="#f0f0f0" text-anchor="middle" font-weight="normal" textLength="19.5" lengthAdjust="spacingAndGlyphs">x100</text>
<g stroke="#e6aa18" fill="none"><path d="M60.78 205.82 A33.4 33.4 0 1 1 108.02 205.82" stroke-width="1.3"/><path d="M58.80 207.80 L55.27 211.33" stroke-width="1.25"/><path d="M55.97 204.61 L53.46 206.59" stroke-width="1.25"/><path d="M53.53 201.11 L50.81 202.79" stroke-width="1.25"/><path d="M51.53 197.36 L48.62 198.70" stroke-width="1.25"/><path d="M49.97 193.39 L46.93 194.38" stroke-width="1.25"/><path d="M48.90 189.26 L43.99 190.24" stroke-width="1.25"/><path d="M48.31 185.04 L45.12 185.29" stroke-width="1.25"/><path d="M48.23 180.78 L45.03 180.65" stroke-width="1.25"/><path d="M48.65 176.54 L45.49 176.04" stroke-width="1.25"/><path d="M49.56 172.37 L46.48 171.51" stroke-width="1.25"/><path d="M50.96 168.35 L46.34 166.43" stroke-width="1.25"/><path d="M52.82 164.51 L50.02 162.95" stroke-width="1.25"/><path d="M55.11 160.92 L52.52 159.04" stroke-width="1.25"/><path d="M57.82 157.63 L55.47 155.46" stroke-width="1.25"/><path d="M60.89 154.67 L58.81 152.24" stroke-width="1.25"/><path d="M64.29 152.10 L61.51 147.94" stroke-width="1.25"/><path d="M67.97 149.95 L66.51 147.09" stroke-width="1.25"/><path d="M71.87 148.24 L70.76 145.24" stroke-width="1.25"/><path d="M75.95 147.00 L75.20 143.89" stroke-width="1.25"/><path d="M80.15 146.25 L79.77 143.07" stroke-width="1.25"/><path d="M84.40 146.00 L84.40 141.00" stroke-width="1.25"/><path d="M88.65 146.25 L89.03 143.07" stroke-width="1.25"/><path d="M92.85 147.00 L93.60 143.89" stroke-width="1.25"/><path d="M96.93 148.24 L98.04 145.24" stroke-width="1.25"/><path d="M100.83 149.95 L102.29 147.09" stroke-width="1.25"/><path d="M104.51 152.10 L107.29 147.94" stroke-width="1.25"/><path d="M107.91 154.67 L109.99 152.24" stroke-width="1.25"/><path d="M110.98 157.63 L113.33 155.46" stroke-width="1.25"/><path d="M113.69 160.92 L116.28 159.04" stroke-width="1.25"/><path d="M115.98 164.51 L118.78 162.95" stroke-width="1.25"/><path d="M117.84 168.35 L122.46 166.43" stroke-width="1.25"/><path d="M119.24 172.37 L122.32 171.51" stroke-width="1.25"/><path d="M120.15 176.54 L123.31 176.04" stroke-width="1.25"/><path d="M120.57 180.78 L123.77 180.65" stroke-width="1.25"/><path d="M120.49 185.04 L123.68 185.29" stroke-width="1.25"/><path d="M119.90 189.26 L124.81 190.24" stroke-width="1.25"/><path d="M118.83 193.39 L121.87 194.38" stroke-width="1.25"/><path d="M117.27 197.36 L120.18 198.70" stroke-width="1.25"/><path d="M115.27 201.11 L117.99 202.79" stroke-width="1.25"/><path d="M112.83 204.61 L115.34 206.59" stroke-width="1.25"/><path d="M110.00 207.80 L113.53 211.33" stroke-width="1.25"/></g>
<path d="M84.19 184.19 L116.30 185.60 L84.61 180.21 Z" fill="#e6aa18" fill-opacity="0.55" stroke="#e6aa18" stroke-width="1" stroke-linejoin="round"/>
<circle cx="84.4" cy="182.2" r="3.2" fill="#e6aa18"/>
<text x="84.4" y="208.7" font-family='"Liberation Mono", monospace' font-size="10.5" fill="#e6aa18" text-anchor="middle" font-weight="normal" textLength="30" lengthAdjust="spacingAndGlyphs">1v/div</text>
<rect x="2.9" y="223.3" width="8.8" height="16.4" fill="#e6aa18"/>
<text x="12.5" y="235" font-family='"Liberation Mono", monospace' font-size="9.5" fill="#8a8a8a" text-anchor="start" font-weight="normal" textLength="4.5" lengthAdjust="spacingAndGlyphs">0</text>
<rect x="55.1" y="223.3" width="25.2" height="16.4" fill="#e6aa18"/>
<text x="67.7" y="234.8" font-family='"Liberation Mono", monospace' font-size="9.5" fill="#f0f0f0" text-anchor="middle" font-weight="normal" textLength="9" lengthAdjust="spacingAndGlyphs">EN</text>
<rect x="89.1" y="223.3" width="24.6" height="16.4" fill="#e6aa18"/>
<text x="101.39999999999999" y="234.8" font-family='"Liberation Mono", monospace' font-size="9.5" fill="#f0f0f0" text-anchor="middle" font-weight="normal" textLength="9.5" lengthAdjust="spacingAndGlyphs">AC</text>
<g stroke="#e6aa18" fill="none"><path d="M60.78 313.62 A33.4 33.4 0 1 1 108.02 313.62" stroke-width="1.3"/><path d="M58.94 315.46 L55.41 318.99" stroke-width="1.2"/><path d="M56.82 313.14 L54.06 315.45" stroke-width="1.2"/><path d="M54.91 310.65 L51.96 312.71" stroke-width="1.2"/><path d="M53.22 308.00 L50.11 309.80" stroke-width="1.2"/><path d="M51.77 305.21 L48.51 306.74" stroke-width="1.2"/><path d="M50.57 302.31 L47.19 303.54" stroke-width="1.2"/><path d="M49.63 299.32 L44.80 300.61" stroke-width="1.2"/><path d="M48.95 296.25 L45.40 296.88" stroke-width="1.2"/><path d="M48.54 293.14 L44.95 293.45" stroke-width="1.2"/><path d="M48.40 290.00 L44.80 290.00" stroke-width="1.2"/><path d="M48.54 286.86 L44.95 286.55" stroke-width="1.2"/><path d="M48.95 283.75 L45.40 283.12" stroke-width="1.2"/><path d="M49.63 280.68 L44.80 279.39" stroke-width="1.2"/><path d="M50.57 277.69 L47.19 276.46" stroke-width="1.2"/><path d="M51.77 274.79 L48.51 273.26" stroke-width="1.2"/><path d="M53.22 272.00 L50.11 270.20" stroke-width="1.2"/><path d="M54.91 269.35 L51.96 267.29" stroke-width="1.2"/><path d="M56.82 266.86 L54.06 264.55" stroke-width="1.2"/><path d="M58.94 264.54 L55.41 261.01" stroke-width="1.2"/><path d="M61.26 262.42 L58.95 259.66" stroke-width="1.2"/><path d="M63.75 260.51 L61.69 257.56" stroke-width="1.2"/><path d="M66.40 258.82 L64.60 255.71" stroke-width="1.2"/><path d="M69.19 257.37 L67.66 254.11" stroke-width="1.2"/><path d="M72.09 256.17 L70.86 252.79" stroke-width="1.2"/><path d="M75.08 255.23 L73.79 250.40" stroke-width="1.2"/><path d="M78.15 254.55 L77.52 251.00" stroke-width="1.2"/><path d="M81.26 254.14 L80.95 250.55" stroke-width="1.2"/><path d="M84.40 254.00 L84.40 250.40" stroke-width="1.2"/><path d="M87.54 254.14 L87.85 250.55" stroke-width="1.2"/><path d="M90.65 254.55 L91.28 251.00" stroke-width="1.2"/><path d="M93.72 255.23 L95.01 250.40" stroke-width="1.2"/><path d="M96.71 256.17 L97.94 252.79" stroke-width="1.2"/><path d="M99.61 257.37 L101.14 254.11" stroke-width="1.2"/><path d="M102.40 258.82 L104.20 255.71" stroke-width="1.2"/><path d="M105.05 260.51 L107.11 257.56" stroke-width="1.2"/><path d="M107.54 262.42 L109.85 259.66" stroke-width="1.2"/><path d="M109.86 264.54 L113.39 261.01" stroke-width="1.2"/><path d="M111.98 266.86 L114.74 264.55" stroke-width="1.2"/><path d="M113.89 269.35 L116.84 267.29" stroke-width="1.2"/><path d="M115.58 272.00 L118.69 270.20" stroke-width="1.2"/><path d="M117.03 274.79 L120.29 273.26" stroke-width="1.2"/><path d="M118.23 277.69 L121.61 276.46" stroke-width="1.2"/><path d="M119.17 280.68 L124.00 279.39" stroke-width="1.2"/><path d="M119.85 283.75 L123.40 283.12" stroke-width="1.2"/><path d="M120.26 286.86 L123.85 286.55" stroke-width="1.2"/><path d="M120.40 290.00 L124.00 290.00" stroke-width="1.2"/><path d="M120.26 293.14 L123.85 293.45" stroke-width="1.2"/><path d="M119.85 296.25 L123.40 296.88" stroke-width="1.2"/><path d="M119.17 299.32 L124.00 300.61" stroke-width="1.2"/><path d="M118.23 302.31 L121.61 303.54" stroke-width="1.2"/><path d="M117.03 305.21 L120.29 306.74" stroke-width="1.2"/><path d="M115.58 308.00 L118.69 309.80" stroke-width="1.2"/><path d="M113.89 310.65 L116.84 312.71" stroke-width="1.2"/><path d="M111.98 313.14 L114.74 315.45" stroke-width="1.2"/><path d="M109.86 315.46 L113.39 318.99" stroke-width="1.2"/><path d="M58.52 315.88 A36.6 36.6 0 1 1 110.28 315.88" stroke-width="1.6"/></g>
<path d="M85.82 288.59 L62.00 267.40 L82.98 291.41 Z" fill="#e6aa18" fill-opacity="0.55" stroke="#e6aa18" stroke-width="1" stroke-linejoin="round"/>
<circle cx="84.4" cy="290" r="3.2" fill="#e6aa18"/>
<text x="84.4" y="316.5" font-family='"Liberation Mono", monospace' font-size="10.5" fill="#e6aa18" text-anchor="middle" font-weight="normal" textLength="39" lengthAdjust="spacingAndGlyphs">10us/div</text>
<rect x="14" y="375.7" width="29.2" height="16.8" fill="#1a9c32"/>
<text x="28.6" y="387.4" font-family='"Liberation Mono", monospace' font-size="9.5" fill="#f0f0f0" text-anchor="middle" font-weight="normal" textLength="9" lengthAdjust="spacingAndGlyphs">x1</text>
<rect x="14" y="394.9" width="29.2" height="16.8" fill="#6e6e6e"/>
<text x="28.6" y="406.59999999999997" font-family='"Liberation Mono", monospace' font-size="9.5" fill="#f0f0f0" text-anchor="middle" font-weight="normal" textLength="14.5" lengthAdjust="spacingAndGlyphs">x10</text>
<rect x="14" y="415.1" width="29.2" height="16.9" fill="#6e6e6e"/>
<text x="28.6" y="426.85" font-family='"Liberation Mono", monospace' font-size="9.5" fill="#f0f0f0" text-anchor="middle" font-weight="normal" textLength="19.5" lengthAdjust="spacingAndGlyphs">x100</text>
<g stroke="#17902d" fill="none"><path d="M60.78 422.52 A33.4 33.4 0 1 1 108.02 422.52" stroke-width="1.3"/><path d="M58.80 424.50 L55.27 428.03" stroke-width="1.25"/><path d="M55.97 421.31 L53.46 423.29" stroke-width="1.25"/><path d="M53.53 417.81 L50.81 419.49" stroke-width="1.25"/><path d="M51.53 414.06 L48.62 415.40" stroke-width="1.25"/><path d="M49.97 410.09 L46.93 411.08" stroke-width="1.25"/><path d="M48.90 405.96 L43.99 406.94" stroke-width="1.25"/><path d="M48.31 401.74 L45.12 401.99" stroke-width="1.25"/><path d="M48.23 397.48 L45.03 397.35" stroke-width="1.25"/><path d="M48.65 393.24 L45.49 392.74" stroke-width="1.25"/><path d="M49.56 389.07 L46.48 388.21" stroke-width="1.25"/><path d="M50.96 385.05 L46.34 383.13" stroke-width="1.25"/><path d="M52.82 381.21 L50.02 379.65" stroke-width="1.25"/><path d="M55.11 377.62 L52.52 375.74" stroke-width="1.25"/><path d="M57.82 374.33 L55.47 372.16" stroke-width="1.25"/><path d="M60.89 371.37 L58.81 368.94" stroke-width="1.25"/><path d="M64.29 368.80 L61.51 364.64" stroke-width="1.25"/><path d="M67.97 366.65 L66.51 363.79" stroke-width="1.25"/><path d="M71.87 364.94 L70.76 361.94" stroke-width="1.25"/><path d="M75.95 363.70 L75.20 360.59" stroke-width="1.25"/><path d="M80.15 362.95 L79.77 359.77" stroke-width="1.25"/><path d="M84.40 362.70 L84.40 357.70" stroke-width="1.25"/><path d="M88.65 362.95 L89.03 359.77" stroke-width="1.25"/><path d="M92.85 363.70 L93.60 360.59" stroke-width="1.25"/><path d="M96.93 364.94 L98.04 361.94" stroke-width="1.25"/><path d="M100.83 366.65 L102.29 363.79" stroke-width="1.25"/><path d="M104.51 368.80 L107.29 364.64" stroke-width="1.25"/><path d="M107.91 371.37 L109.99 368.94" stroke-width="1.25"/><path d="M110.98 374.33 L113.33 372.16" stroke-width="1.25"/><path d="M113.69 377.62 L116.28 375.74" stroke-width="1.25"/><path d="M115.98 381.21 L118.78 379.65" stroke-width="1.25"/><path d="M117.84 385.05 L122.46 383.13" stroke-width="1.25"/><path d="M119.24 389.07 L122.32 388.21" stroke-width="1.25"/><path d="M120.15 393.24 L123.31 392.74" stroke-width="1.25"/><path d="M120.57 397.48 L123.77 397.35" stroke-width="1.25"/><path d="M120.49 401.74 L123.68 401.99" stroke-width="1.25"/><path d="M119.90 405.96 L124.81 406.94" stroke-width="1.25"/><path d="M118.83 410.09 L121.87 411.08" stroke-width="1.25"/><path d="M117.27 414.06 L120.18 415.40" stroke-width="1.25"/><path d="M115.27 417.81 L117.99 419.49" stroke-width="1.25"/><path d="M112.83 421.31 L115.34 423.29" stroke-width="1.25"/><path d="M110.00 424.50 L113.53 428.03" stroke-width="1.25"/></g>
<path d="M84.19 400.89 L116.30 402.30 L84.61 396.91 Z" fill="#17902d" fill-opacity="0.55" stroke="#17902d" stroke-width="1" stroke-linejoin="round"/>
<circle cx="84.4" cy="398.9" r="3.2" fill="#17902d"/>
<text x="84.4" y="425.4" font-family='"Liberation Mono", monospace' font-size="10.5" fill="#17902d" text-anchor="middle" font-weight="normal" textLength="30" lengthAdjust="spacingAndGlyphs">1v/div</text>
<rect x="2.9" y="440.0" width="8.8" height="16.4" fill="#1a9c32"/>
<text x="12.5" y="451.7" font-family='"Liberation Mono", monospace' font-size="9.5" fill="#8a8a8a" text-anchor="start" font-weight="normal" textLength="4.5" lengthAdjust="spacingAndGlyphs">1</text>
<rect x="55.1" y="440.0" width="25.2" height="16.4" fill="#1a9c32"/>
<text x="67.7" y="451.5" font-family='"Liberation Mono", monospace' font-size="9.5" fill="#f0f0f0" text-anchor="middle" font-weight="normal" textLength="9" lengthAdjust="spacingAndGlyphs">EN</text>
<rect x="89.1" y="440.0" width="24.6" height="16.4" fill="#1a9c32"/>
<text x="101.39999999999999" y="451.5" font-family='"Liberation Mono", monospace' font-size="9.5" fill="#f0f0f0" text-anchor="middle" font-weight="normal" textLength="9.5" lengthAdjust="spacingAndGlyphs">DC</text>
<g stroke="#17902d" fill="none"><path d="M60.78 530.32 A33.4 33.4 0 1 1 108.02 530.32" stroke-width="1.3"/><path d="M58.94 532.16 L55.41 535.69" stroke-width="1.2"/><path d="M56.82 529.84 L54.06 532.15" stroke-width="1.2"/><path d="M54.91 527.35 L51.96 529.41" stroke-width="1.2"/><path d="M53.22 524.70 L50.11 526.50" stroke-width="1.2"/><path d="M51.77 521.91 L48.51 523.44" stroke-width="1.2"/><path d="M50.57 519.01 L47.19 520.24" stroke-width="1.2"/><path d="M49.63 516.02 L44.80 517.31" stroke-width="1.2"/><path d="M48.95 512.95 L45.40 513.58" stroke-width="1.2"/><path d="M48.54 509.84 L44.95 510.15" stroke-width="1.2"/><path d="M48.40 506.70 L44.80 506.70" stroke-width="1.2"/><path d="M48.54 503.56 L44.95 503.25" stroke-width="1.2"/><path d="M48.95 500.45 L45.40 499.82" stroke-width="1.2"/><path d="M49.63 497.38 L44.80 496.09" stroke-width="1.2"/><path d="M50.57 494.39 L47.19 493.16" stroke-width="1.2"/><path d="M51.77 491.49 L48.51 489.96" stroke-width="1.2"/><path d="M53.22 488.70 L50.11 486.90" stroke-width="1.2"/><path d="M54.91 486.05 L51.96 483.99" stroke-width="1.2"/><path d="M56.82 483.56 L54.06 481.25" stroke-width="1.2"/><path d="M58.94 481.24 L55.41 477.71" stroke-width="1.2"/><path d="M61.26 479.12 L58.95 476.36" stroke-width="1.2"/><path d="M63.75 477.21 L61.69 474.26" stroke-width="1.2"/><path d="M66.40 475.52 L64.60 472.41" stroke-width="1.2"/><path d="M69.19 474.07 L67.66 470.81" stroke-width="1.2"/><path d="M72.09 472.87 L70.86 469.49" stroke-width="1.2"/><path d="M75.08 471.93 L73.79 467.10" stroke-width="1.2"/><path d="M78.15 471.25 L77.52 467.70" stroke-width="1.2"/><path d="M81.26 470.84 L80.95 467.25" stroke-width="1.2"/><path d="M84.40 470.70 L84.40 467.10" stroke-width="1.2"/><path d="M87.54 470.84 L87.85 467.25" stroke-width="1.2"/><path d="M90.65 471.25 L91.28 467.70" stroke-width="1.2"/><path d="M93.72 471.93 L95.01 467.10" stroke-width="1.2"/><path d="M96.71 472.87 L97.94 469.49" stroke-width="1.2"/><path d="M99.61 474.07 L101.14 470.81" stroke-width="1.2"/><path d="M102.40 475.52 L104.20 472.41" stroke-width="1.2"/><path d="M105.05 477.21 L107.11 474.26" stroke-width="1.2"/><path d="M107.54 479.12 L109.85 476.36" stroke-width="1.2"/><path d="M109.86 481.24 L113.39 477.71" stroke-width="1.2"/><path d="M111.98 483.56 L114.74 481.25" stroke-width="1.2"/><path d="M113.89 486.05 L116.84 483.99" stroke-width="1.2"/><path d="M115.58 488.70 L118.69 486.90" stroke-width="1.2"/><path d="M117.03 491.49 L120.29 489.96" stroke-width="1.2"/><path d="M118.23 494.39 L121.61 493.16" stroke-width="1.2"/><path d="M119.17 497.38 L124.00 496.09" stroke-width="1.2"/><path d="M119.85 500.45 L123.40 499.82" stroke-width="1.2"/><path d="M120.26 503.56 L123.85 503.25" stroke-width="1.2"/><path d="M120.40 506.70 L124.00 506.70" stroke-width="1.2"/><path d="M120.26 509.84 L123.85 510.15" stroke-width="1.2"/><path d="M119.85 512.95 L123.40 513.58" stroke-width="1.2"/><path d="M119.17 516.02 L124.00 517.31" stroke-width="1.2"/><path d="M118.23 519.01 L121.61 520.24" stroke-width="1.2"/><path d="M117.03 521.91 L120.29 523.44" stroke-width="1.2"/><path d="M115.58 524.70 L118.69 526.50" stroke-width="1.2"/><path d="M113.89 527.35 L116.84 529.41" stroke-width="1.2"/><path d="M111.98 529.84 L114.74 532.15" stroke-width="1.2"/><path d="M109.86 532.16 L113.39 535.69" stroke-width="1.2"/><path d="M58.52 532.58 A36.6 36.6 0 1 1 110.28 532.58" stroke-width="1.6"/></g>
<path d="M85.82 505.29 L62.00 484.10 L82.98 508.11 Z" fill="#17902d" fill-opacity="0.55" stroke="#17902d" stroke-width="1" stroke-linejoin="round"/>
<circle cx="84.4" cy="506.7" r="3.2" fill="#17902d"/>
<text x="84.4" y="533.2" font-family='"Liberation Mono", monospace' font-size="10.5" fill="#17902d" text-anchor="middle" font-weight="normal" textLength="39" lengthAdjust="spacingAndGlyphs">10us/div</text>
<rect x="823" y="72" width="201" height="25" fill="#272727"/>
<text x="828.2" y="83.5" font-family='"Liberation Mono", monospace' font-size="10.5" fill="#d4d4d4" text-anchor="start" font-weight="normal" textLength="88" lengthAdjust="spacingAndGlyphs">Trigger Setting...</text>
<text x="835.6" y="118" font-family='"Liberation Mono", monospace' font-size="10.5" fill="#d0d0d0" text-anchor="start" font-weight="normal" textLength="83" lengthAdjust="spacingAndGlyphs">Trigger Position:</text>
<rect x="941" y="105.4" width="49.3" height="15.6" fill="#1f1f1f"/>
<text x="957.5" y="117.3" font-family='"Liberation Mono", monospace' font-size="10.5" fill="#d0d0d0" text-anchor="middle" font-weight="normal" textLength="5" lengthAdjust="spacingAndGlyphs">0</text>
<text x="1002" y="117.3" font-family='"Liberation Mono", monospace' font-size="10" fill="#d0d0d0" text-anchor="middle" font-weight="normal" textLength="5" lengthAdjust="spacingAndGlyphs">%</text>
<rect x="833" y="131.4" width="190" height="5.6" fill="#1f1f1f"/>
<defs><linearGradient id="sh1" x1="0" x2="0" y1="0" y2="1"><stop offset="0" stop-color="#d0d0d0"/><stop offset="1" stop-color="#8a8a8a"/></linearGradient></defs>
<rect x="833.5" y="127.80000000000001" width="8.5" height="12.4" rx="1" fill="url(#sh1)"/>
<text x="835.6" y="172" font-family='"Liberation Mono", monospace' font-size="10.5" fill="#d0d0d0" text-anchor="start" font-weight="normal" textLength="78" lengthAdjust="spacingAndGlyphs">Trigger Sources:</text>
<circle cx="840.3" cy="185.5" r="5.2" fill="none" stroke="#6e6e6e" stroke-width="1.1"/>
<circle cx="840.3" cy="185.5" r="3.3" fill="#9a9a9a"/>
<text x="853.0" y="189.1" font-family='"Liberation Mono", monospace' font-size="10.5" fill="#d0d0d0" text-anchor="start" font-weight="normal" textLength="20" lengthAdjust="spacingAndGlyphs">Auto</text>
<rect x="939.6" y="177.7" width="84.4" height="15.6" fill="#1f1f1f"/>
<text x="942" y="189.3" font-family='"Liberation Mono", monospace' font-size="10.5" fill="#d0d0d0" text-anchor="start" font-weight="normal" textLength="5" lengthAdjust="spacingAndGlyphs">0</text>
<circle cx="840.3" cy="208.6" r="5.2" fill="none" stroke="#6e6e6e" stroke-width="1.1"/>
<text x="853.0" y="212.2" font-family='"Liberation Mono", monospace' font-size="10.5" fill="#d0d0d0" text-anchor="start" font-weight="normal" textLength="44" lengthAdjust="spacingAndGlyphs">Channel 0</text>
<circle cx="948" cy="208.6" r="5.2" fill="none" stroke="#6e6e6e" stroke-width="1.1"/>
<text x="960.7" y="212.2" font-family='"Liberation Mono", monospace' font-size="10.5" fill="#d0d0d0" text-anchor="start" font-weight="normal" textLength="44" lengthAdjust="spacingAndGlyphs">Channel 1</text>
<circle cx="840.3" cy="231.5" r="5.2" fill="none" stroke="#6e6e6e" stroke-width="1.1"/>
<text x="853.0" y="235.1" font-family='"Liberation Mono", monospace' font-size="10.5" fill="#d0d0d0" text-anchor="start" font-weight="normal" textLength="64" lengthAdjust="spacingAndGlyphs">Channel 0 &amp; 1</text>
<circle cx="948" cy="231.5" r="5.2" fill="none" stroke="#6e6e6e" stroke-width="1.1"/>
<text x="960.7" y="235.1" font-family='"Liberation Mono", monospace' font-size="10.5" fill="#d0d0d0" text-anchor="start" font-weight="normal" textLength="64" lengthAdjust="spacingAndGlyphs">Channel 0 | 1</text>
<text x="835.6" y="271.3" font-family='"Liberation Mono", monospace' font-size="10.5" fill="#d0d0d0" text-anchor="start" font-weight="normal" textLength="68.5" lengthAdjust="spacingAndGlyphs">Trigger Types:</text>
<circle cx="840.3" cy="284.3" r="5.2" fill="none" stroke="#6e6e6e" stroke-width="1.1"/>
<circle cx="840.3" cy="284.3" r="3.3" fill="#9a9a9a"/>
<text x="853.0" y="287.90000000000003" font-family='"Liberation Mono", monospace' font-size="10.5" fill="#d0d0d0" text-anchor="start" font-weight="normal" textLength="54" lengthAdjust="spacingAndGlyphs">Rising Edge</text>
<circle cx="840.3" cy="307.7" r="5.2" fill="none" stroke="#6e6e6e" stroke-width="1.1"/>
<text x="853.0" y="311.3" font-family='"Liberation Mono", monospace' font-size="10.5" fill="#d0d0d0" text-anchor="start" font-weight="normal" textLength="59" lengthAdjust="spacingAndGlyphs">Falling Edge</text>
<text x="835.6" y="350.5" font-family='"Liberation Mono", monospace' font-size="10.5" fill="#d0d0d0" text-anchor="start" font-weight="normal" textLength="68.5" lengthAdjust="spacingAndGlyphs">Hold Off Time:</text>
<rect x="941" y="338.9" width="49" height="15.6" fill="#1f1f1f"/>
<text x="962" y="350.3" font-family='"Liberation Mono", monospace' font-size="10.5" fill="#d0d0d0" text-anchor="middle" font-weight="normal" textLength="15" lengthAdjust="spacingAndGlyphs">434</text>
<rect x="997" y="338.9" width="27" height="15.6" fill="#1f1f1f"/>
<text x="999.5" y="350.3" font-family='"Liberation Mono", monospace' font-size="10.5" fill="#d0d0d0" text-anchor="start" font-weight="normal" textLength="10" lengthAdjust="spacingAndGlyphs">uS</text>
<path d="M1017 345.5 L1022 345.5 L1019.5 348.5 Z" fill="#cfcfcf"/>
<rect x="833" y="364.5" width="190" height="5.6" fill="#1f1f1f"/>
<defs><linearGradient id="sh2" x1="0" x2="0" y1="0" y2="1"><stop offset="0" stop-color="#d0d0d0"/><stop offset="1" stop-color="#8a8a8a"/></linearGradient></defs>
<rect x="914.5" y="360.9" width="8.5" height="12.4" rx="1" fill="url(#sh2)"/>
<text x="835.6" y="405.2" font-family='"Liberation Mono", monospace' font-size="10.5" fill="#d0d0d0" text-anchor="start" font-weight="normal" textLength="87.5" lengthAdjust="spacingAndGlyphs">Noise Sensitivity:</text>
<rect x="833" y="414.4" width="190" height="5.6" fill="#1f1f1f"/>
<defs><linearGradient id="sh3" x1="0" x2="0" y1="0" y2="1"><stop offset="0" stop-color="#d0d0d0"/><stop offset="1" stop-color="#8a8a8a"/></linearGradient></defs>
<rect x="933.8" y="410.79999999999995" width="8.5" height="12.4" rx="1" fill="url(#sh3)"/>
<rect x="823" y="557" width="201" height="20" fill="#2a2a2a"/>
<path d="M834 563.5 L828 567.3 L834 571 Z" fill="#b0b0b0"/>
<rect x="837" y="563.5" width="158" height="8" rx="4" fill="#6e6e6e"/>
<path d="M1014 563.5 L1020 567.3 L1014 571 Z" fill="#b0b0b0"/></svg></body></html>
